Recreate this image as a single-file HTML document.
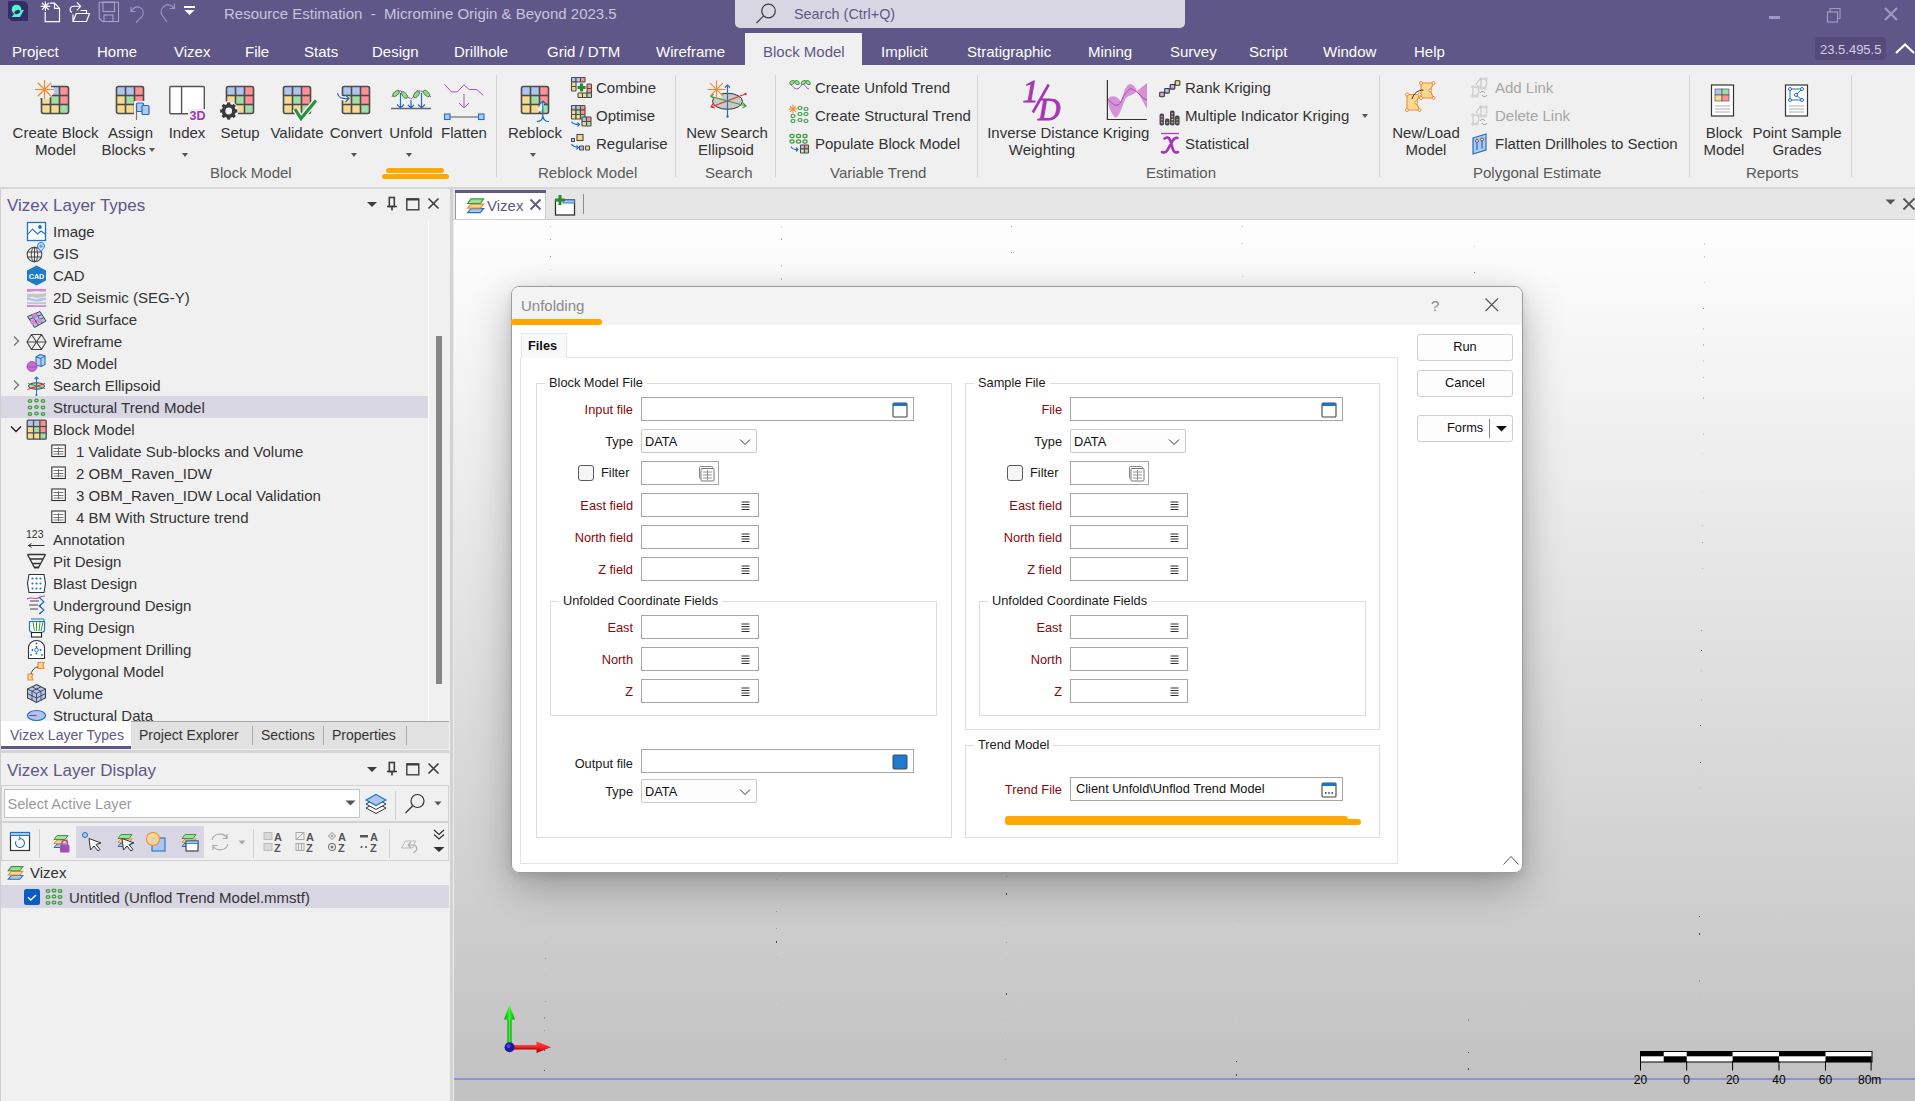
<!DOCTYPE html><html><head><meta charset="utf-8"><style>
*{box-sizing:border-box;margin:0;padding:0}
html,body{width:1915px;height:1101px;overflow:hidden;background:#f0f0f0}
body{font-family:"Liberation Sans",sans-serif;color:#333;position:relative}
.a{position:absolute}
.t{position:absolute;white-space:pre;line-height:1}
svg{position:absolute;overflow:visible}
.menu{position:absolute;top:44px;font-size:15px;color:#fff;line-height:1;white-space:pre}
.rl{position:absolute;font-size:15px;color:#333;line-height:1;white-space:pre;text-align:center}
.gl{position:absolute;top:165px;font-size:15px;color:#595959;line-height:1;white-space:pre}
.sep{position:absolute;top:75px;width:1px;height:102px;background:#d4d4d4}
.sm{position:absolute;font-size:15px;color:#333;line-height:1;white-space:pre}
.dd{position:absolute;width:0;height:0;border-left:3.5px solid transparent;border-right:3.5px solid transparent;border-top:4px solid #555}
.ptitle{position:absolute;font-size:17px;color:#5f5787;line-height:1;white-space:pre}
.tr{position:absolute;font-size:15px;color:#333;line-height:1;white-space:pre}
.dl{position:absolute;font-size:12.8px;line-height:1;white-space:pre;color:#1a1a1a}
.red{color:#8b1016}
.fld{position:absolute;height:24px;background:#fff;border:1px solid #a6a6a6}
.grp{position:absolute;border:1px solid #dcdcdc}
.gt{position:absolute;font-size:12.8px;line-height:1;white-space:pre;color:#1a1a1a;background:#fff;padding:0 4px}
.btn{position:absolute;background:#fdfdfd;border:1px solid #cfcfcf;border-radius:3px;font-size:12.8px;color:#1a1a1a;text-align:center}
</style></head><body>
<div class="a" style="left:0;top:0;width:1915px;height:65px;background:#5f5787"></div>
<svg style="left:8px;top:1px" width="21" height="21" viewBox="0 0 21 21" ><path d="M0 0h16.5l3.5 3.5V20H3.5L0 16.5z" fill="#382b69"/><circle cx="8.5" cy="8.5" r="4.8" fill="#4dfbd0"/><path d="M3.8 16L7 11.5 11 9.5 16 8.8 12 16z" fill="#4dfbd0"/><ellipse cx="9.3" cy="11" rx="3" ry="1.9" transform="rotate(-22 9.3 11)" fill="#382b69"/></svg>
<svg style="left:40px;top:1px" width="22" height="22" viewBox="0 0 22 22" ><line x1="0.70" y1="5.30" x2="10.10" y2="5.30" stroke="#ffffff" stroke-width="1.2"/><line x1="2.08" y1="1.98" x2="8.72" y2="8.62" stroke="#ffffff" stroke-width="1.2"/><line x1="5.40" y1="0.60" x2="5.40" y2="10.00" stroke="#ffffff" stroke-width="1.2"/><line x1="8.72" y1="1.98" x2="2.08" y2="8.62" stroke="#ffffff" stroke-width="1.2"/><path d="M5.2 11V20.6h14.3V7.4l-5-5.2H9.8" fill="none" stroke="#fff" stroke-width="1.2"/><path d="M14.5 2.2v5.2h5" fill="none" stroke="#fff" stroke-width="1.1"/></svg>
<svg style="left:69px;top:1px" width="24" height="22" viewBox="0 0 24 22" ><path d="M3 11.5C0.2 10 0.3 5.3 5 5.3H11.5M7.8 1.3l3.9 4-3.9 4.1" fill="none" stroke="#fff" stroke-width="1.1"/><path d="M11.5 9.5H17.5V12.5M4 13.5V20.5H17.5L20.5 12.5H7.2L4 20.5" fill="none" stroke="#fff" stroke-width="1.2"/></svg>
<svg style="left:98px;top:1px" width="22" height="22" viewBox="0 0 22 22" ><path d="M1.2 1.2h19.3v19.3H4.5L1.2 17.2z" fill="none" stroke="#aaa3c8" stroke-width="1.1"/><rect x="5" y="1.2" width="11.5" height="9.3" fill="none" stroke="#aaa3c8" stroke-width="1.1"/><rect x="6" y="14" width="9" height="6.5" fill="none" stroke="#aaa3c8" stroke-width="1.1"/></svg>
<svg style="left:129px;top:2px" width="20" height="21" viewBox="0 0 20 21" ><path d="M2 5v4.5h4.5M2.5 9C5 5 8 4 11 5.5s4 5 2.5 8.5L7 20.5" fill="none" stroke="#9e96bd" stroke-width="1.2"/></svg>
<svg style="left:157px;top:2px" width="20" height="21" viewBox="0 0 20 21" ><path d="M17.5 1.5v5h-5M17 6C14 2.5 10.5 2 7.5 4S3 9.5 5 13l5 7" fill="none" stroke="#9e96bd" stroke-width="1.2"/></svg>
<svg style="left:183px;top:5px" width="14" height="12" viewBox="0 0 14 12" ><rect x="1" y="1" width="11" height="2" fill="#fff"/><path d="M1.5 5h10l-5 5z" fill="#fff"/></svg>
<div class="t" style="left:224px;top:6px;font-size:15px;color:#c9c4dd">Resource Estimation  -  Micromine Origin &amp; Beyond 2023.5</div>
<div class="a" style="left:735px;top:0;width:450px;height:28px;background:#d9d6e4;border-radius:0 0 5px 5px"></div>
<svg style="left:755px;top:2px" width="24" height="24" viewBox="0 0 24 24" ><circle cx="13.5" cy="9" r="6.8" fill="none" stroke="#3c3c3c" stroke-width="1.2"/><line x1="8.7" y1="13.8" x2="1.5" y2="21" stroke="#3c3c3c" stroke-width="1.2"/></svg>
<div class="t" style="left:794px;top:6.5px;font-size:14.4px;color:#5f5787">Search (Ctrl+Q)</div>
<div class="a" style="left:1769px;top:16px;width:11px;height:3px;background:#9f98bf"></div>
<svg style="left:1826px;top:7px" width="15" height="16" viewBox="0 0 15 16" ><rect x="1.5" y="5" width="10" height="10" fill="none" stroke="#9f98bf" stroke-width="1.2"/><path d="M4 5V1.5h10v10h-2.5" fill="none" stroke="#9f98bf" stroke-width="1.2"/></svg>
<svg style="left:1883px;top:6px" width="16" height="16" viewBox="0 0 16 16" ><path d="M2 2l12 12M14 2L2 14" stroke="#9f98bf" stroke-width="2.2"/></svg>
<div class="a" style="left:1815px;top:37px;width:71px;height:23px;background:#544b7a;border-radius:4px"></div>
<div class="t" style="left:1820px;top:43px;font-size:13px;color:#d2cde3">23.5.495.5</div>
<svg style="left:1894px;top:41px" width="22" height="16" viewBox="0 0 22 16" ><path d="M2 12l9-8.5 9 8.5" fill="none" stroke="#fff" stroke-width="2.2"/></svg>
<div class="menu" style="left:12px">Project</div>
<div class="menu" style="left:97px">Home</div>
<div class="menu" style="left:174px">Vizex</div>
<div class="menu" style="left:245px">File</div>
<div class="menu" style="left:304px">Stats</div>
<div class="menu" style="left:372px">Design</div>
<div class="menu" style="left:454px">Drillhole</div>
<div class="menu" style="left:547px">Grid / DTM</div>
<div class="menu" style="left:656px">Wireframe</div>
<div class="a" style="left:745px;top:33px;width:117px;height:32px;background:#f0f0f0"></div>
<div class="menu" style="left:763px;color:#5f5787">Block Model</div>
<div class="menu" style="left:881px">Implicit</div>
<div class="menu" style="left:967px">Stratigraphic</div>
<div class="menu" style="left:1088px">Mining</div>
<div class="menu" style="left:1170px">Survey</div>
<div class="menu" style="left:1249px">Script</div>
<div class="menu" style="left:1323px">Window</div>
<div class="menu" style="left:1414px">Help</div>
<div class="a" style="left:0;top:187px;width:1915px;height:2px;background:#d6d6d6"></div>
<div class="rl" style="left:0px;top:124.5px;width:111px;">Create Block</div>
<div class="rl" style="left:0px;top:141.5px;width:111px;">Model</div>
<div class="rl" style="left:80px;top:124.5px;width:101px;">Assign</div>
<div class="rl" style="left:101.5px;top:141.5px;text-align:left">Blocks</div>
<div class="dd" style="left:149px;top:148px"></div>
<div class="rl" style="left:147px;top:124.5px;width:80px;">Index</div>
<div class="dd" style="left:182px;top:153px"></div>
<div class="rl" style="left:200px;top:124.5px;width:80px;">Setup</div>
<div class="rl" style="left:257px;top:124.5px;width:80px;">Validate</div>
<div class="rl" style="left:316px;top:124.5px;width:80px;">Convert</div>
<div class="dd" style="left:351px;top:153px"></div>
<div class="rl" style="left:371px;top:124.5px;width:80px;">Unfold</div>
<div class="dd" style="left:406px;top:153px"></div>
<div class="rl" style="left:424px;top:124.5px;width:80px;">Flatten</div>
<div class="sep" style="left:496px"></div>
<div class="rl" style="left:495px;top:124.5px;width:80px;">Reblock</div>
<div class="dd" style="left:530px;top:153px"></div>
<div class="sm" style="left:596px;top:79.5px">Combine</div>
<div class="sm" style="left:596px;top:107.5px">Optimise</div>
<div class="sm" style="left:596px;top:135.5px">Regularise</div>
<div class="sep" style="left:675px"></div>
<div class="rl" style="left:667px;top:124.5px;width:120px;">New Search</div>
<div class="rl" style="left:666px;top:141.5px;width:120px;">Ellipsoid</div>
<div class="sep" style="left:775px"></div>
<div class="sm" style="left:815px;top:79.5px">Create Unfold Trend</div>
<div class="sm" style="left:815px;top:107.5px">Create Structural Trend</div>
<div class="sm" style="left:815px;top:135.5px">Populate Block Model</div>
<div class="sep" style="left:977px"></div>
<div class="rl" style="left:973px;top:124.5px;width:140px;">Inverse Distance</div>
<div class="rl" style="left:972px;top:141.5px;width:140px;">Weighting</div>
<div class="rl" style="left:1086px;top:124.5px;width:80px;">Kriging</div>
<div class="sm" style="left:1185px;top:79.5px">Rank Kriging</div>
<div class="sm" style="left:1185px;top:107.5px">Multiple Indicator Kriging</div>
<div class="sm" style="left:1185px;top:135.5px">Statistical</div>
<div class="dd" style="left:1362px;top:114px"></div>
<div class="sep" style="left:1379px"></div>
<div class="rl" style="left:1376px;top:124.5px;width:100px;">New/Load</div>
<div class="rl" style="left:1376px;top:141.5px;width:100px;">Model</div>
<div class="sm" style="left:1495px;top:79.5px;color:#a6a6a6">Add Link</div>
<div class="sm" style="left:1495px;top:107.5px;color:#a6a6a6">Delete Link</div>
<div class="sm" style="left:1495px;top:135.5px">Flatten Drillholes to Section</div>
<div class="sep" style="left:1689px"></div>
<div class="rl" style="left:1684px;top:124.5px;width:80px;">Block</div>
<div class="rl" style="left:1684px;top:141.5px;width:80px;">Model</div>
<div class="rl" style="left:1747px;top:124.5px;width:100px;">Point Sample</div>
<div class="rl" style="left:1747px;top:141.5px;width:100px;">Grades</div>
<div class="sep" style="left:1851px"></div>
<div class="gl" style="left:210px">Block Model</div>
<div class="gl" style="left:538px">Reblock Model</div>
<div class="gl" style="left:705px">Search</div>
<div class="gl" style="left:830px">Variable Trend</div>
<div class="gl" style="left:1146px">Estimation</div>
<div class="gl" style="left:1473px">Polygonal Estimate</div>
<div class="gl" style="left:1746px">Reports</div>
<div class="a" style="left:386px;top:168px;width:58px;height:5px;background:#ffa800;border-radius:3px"></div>
<div class="a" style="left:382px;top:173.5px;width:67px;height:5px;background:#ffa800;border-radius:3px"></div>
<svg style="left:30px;top:75px" width="45" height="45" viewBox="0 0 45 45" ><rect x="11.50" y="11.50" width="9.00" height="9.00" fill="#aec5ee"/><rect x="20.50" y="11.50" width="9.00" height="9.00" fill="#aec5ee"/><rect x="29.50" y="11.50" width="9.00" height="9.00" fill="#ff9196"/><rect x="11.50" y="20.50" width="9.00" height="9.00" fill="#f7da8f"/><rect x="20.50" y="20.50" width="9.00" height="9.00" fill="#a1dda6"/><rect x="29.50" y="20.50" width="9.00" height="9.00" fill="#ff9196"/><rect x="11.50" y="29.50" width="9.00" height="9.00" fill="#f7da8f"/><rect x="20.50" y="29.50" width="9.00" height="9.00" fill="#f7da8f"/><rect x="29.50" y="29.50" width="9.00" height="9.00" fill="#a1dda6"/><rect x="11.50" y="11.50" width="27" height="27" rx="2" fill="none" stroke="#4b4b4b" stroke-width="1.6"/><line x1="20.50" y1="11.5" x2="20.50" y2="38.5" stroke="#4b4b4b" stroke-width="1.6"/><line x1="11.5" y1="20.50" x2="38.5" y2="20.50" stroke="#4b4b4b" stroke-width="1.6"/><line x1="29.50" y1="11.5" x2="29.50" y2="38.5" stroke="#4b4b4b" stroke-width="1.6"/><line x1="11.5" y1="29.50" x2="38.5" y2="29.50" stroke="#4b4b4b" stroke-width="1.6"/><circle cx="14.5" cy="14.5" r="9.8" fill="#f0f0f0"/><path d="M11.5 24.5 V23 M24.3 11.5 H21" fill="none" stroke="#4b4b4b" stroke-width="1.6"/><line x1="5.00" y1="14.50" x2="24.00" y2="14.50" stroke="#f08a38" stroke-width="1.2"/><line x1="7.78" y1="7.78" x2="21.22" y2="21.22" stroke="#f08a38" stroke-width="1.2"/><line x1="14.50" y1="5.00" x2="14.50" y2="24.00" stroke="#f08a38" stroke-width="1.2"/><line x1="21.22" y1="7.78" x2="7.78" y2="21.22" stroke="#f08a38" stroke-width="1.2"/></svg>
<svg style="left:110px;top:75px" width="45" height="50" viewBox="0 0 45 50" ><rect x="6.50" y="11.50" width="9.00" height="9.00" fill="#aec5ee"/><rect x="15.50" y="11.50" width="9.00" height="9.00" fill="#aec5ee"/><rect x="24.50" y="11.50" width="9.00" height="9.00" fill="#ff9196"/><rect x="6.50" y="20.50" width="9.00" height="9.00" fill="#f7da8f"/><rect x="15.50" y="20.50" width="9.00" height="9.00" fill="#a1dda6"/><rect x="24.50" y="20.50" width="9.00" height="9.00" fill="#ff9196"/><rect x="6.50" y="29.50" width="9.00" height="9.00" fill="#f7da8f"/><rect x="15.50" y="29.50" width="9.00" height="9.00" fill="#f7da8f"/><rect x="24.50" y="29.50" width="9.00" height="9.00" fill="#a1dda6"/><rect x="6.50" y="11.50" width="27" height="27" rx="2" fill="none" stroke="#4b4b4b" stroke-width="1.6"/><line x1="15.50" y1="11.5" x2="15.50" y2="38.5" stroke="#4b4b4b" stroke-width="1.6"/><line x1="6.5" y1="20.50" x2="33.5" y2="20.50" stroke="#4b4b4b" stroke-width="1.6"/><line x1="24.50" y1="11.5" x2="24.50" y2="38.5" stroke="#4b4b4b" stroke-width="1.6"/><line x1="6.5" y1="29.50" x2="33.5" y2="29.50" stroke="#4b4b4b" stroke-width="1.6"/><rect x="24" y="26" width="12" height="14" fill="#f0f0f0"/><line x1="26.5" y1="36" x2="26.5" y2="45" stroke="#777" stroke-width="1.2"/><rect x="26.5" y="28" width="7" height="8.5" rx="1" fill="#b0c8f0" stroke="#1f6fc0" stroke-width="1.2"/><rect x="32" y="30.5" width="7" height="9" rx="1" fill="#b0c8f0" stroke="#1f6fc0" stroke-width="1.2"/></svg>
<svg style="left:165px;top:80px" width="48" height="45" viewBox="0 0 48 45" ><rect x="4.8" y="6.5" width="34.5" height="27.3" rx="1" fill="#fff" stroke="#555" stroke-width="1.4"/><line x1="16.6" y1="6.5" x2="16.6" y2="33.8" stroke="#555" stroke-width="1.4"/><rect x="23" y="29" width="20" height="12" fill="#f0f0f0"/><text x="24.5" y="39.5" font-family="Liberation Sans" font-weight="bold" font-size="12.5" fill="#a535b5">3D</text></svg>
<svg style="left:215px;top:75px" width="45" height="50" viewBox="0 0 45 50" ><rect x="11.50" y="11.50" width="9.00" height="9.00" fill="#aec5ee"/><rect x="20.50" y="11.50" width="9.00" height="9.00" fill="#aec5ee"/><rect x="29.50" y="11.50" width="9.00" height="9.00" fill="#ff9196"/><rect x="11.50" y="20.50" width="9.00" height="9.00" fill="#f7da8f"/><rect x="20.50" y="20.50" width="9.00" height="9.00" fill="#a1dda6"/><rect x="29.50" y="20.50" width="9.00" height="9.00" fill="#ff9196"/><rect x="11.50" y="29.50" width="9.00" height="9.00" fill="#f7da8f"/><rect x="20.50" y="29.50" width="9.00" height="9.00" fill="#f7da8f"/><rect x="29.50" y="29.50" width="9.00" height="9.00" fill="#a1dda6"/><rect x="11.50" y="11.50" width="27" height="27" rx="2" fill="none" stroke="#4b4b4b" stroke-width="1.6"/><line x1="20.50" y1="11.5" x2="20.50" y2="38.5" stroke="#4b4b4b" stroke-width="1.6"/><line x1="11.5" y1="20.50" x2="38.5" y2="20.50" stroke="#4b4b4b" stroke-width="1.6"/><line x1="29.50" y1="11.5" x2="29.50" y2="38.5" stroke="#4b4b4b" stroke-width="1.6"/><line x1="11.5" y1="29.50" x2="38.5" y2="29.50" stroke="#4b4b4b" stroke-width="1.6"/><circle cx="13.5" cy="36" r="10" fill="#f0f0f0"/><g transform="translate(13.7,36)"><circle r="5.2" fill="none" stroke="#3a3a3a" stroke-width="3.6"/><rect x="-1.6" y="-8.6" width="3.2" height="4" fill="#3a3a3a" transform="rotate(0)"/><rect x="-1.6" y="-8.6" width="3.2" height="4" fill="#3a3a3a" transform="rotate(45)"/><rect x="-1.6" y="-8.6" width="3.2" height="4" fill="#3a3a3a" transform="rotate(90)"/><rect x="-1.6" y="-8.6" width="3.2" height="4" fill="#3a3a3a" transform="rotate(135)"/><rect x="-1.6" y="-8.6" width="3.2" height="4" fill="#3a3a3a" transform="rotate(180)"/><rect x="-1.6" y="-8.6" width="3.2" height="4" fill="#3a3a3a" transform="rotate(225)"/><rect x="-1.6" y="-8.6" width="3.2" height="4" fill="#3a3a3a" transform="rotate(270)"/><rect x="-1.6" y="-8.6" width="3.2" height="4" fill="#3a3a3a" transform="rotate(315)"/></g></svg>
<svg style="left:275px;top:75px" width="50" height="50" viewBox="0 0 50 50" ><rect x="8.50" y="11.50" width="9.00" height="9.00" fill="#aec5ee"/><rect x="17.50" y="11.50" width="9.00" height="9.00" fill="#aec5ee"/><rect x="26.50" y="11.50" width="9.00" height="9.00" fill="#ff9196"/><rect x="8.50" y="20.50" width="9.00" height="9.00" fill="#f7da8f"/><rect x="17.50" y="20.50" width="9.00" height="9.00" fill="#a1dda6"/><rect x="26.50" y="20.50" width="9.00" height="9.00" fill="#ff9196"/><rect x="8.50" y="29.50" width="9.00" height="9.00" fill="#f7da8f"/><rect x="17.50" y="29.50" width="9.00" height="9.00" fill="#f7da8f"/><rect x="26.50" y="29.50" width="9.00" height="9.00" fill="#a1dda6"/><rect x="8.50" y="11.50" width="27" height="27" rx="2" fill="none" stroke="#4b4b4b" stroke-width="1.6"/><line x1="17.50" y1="11.5" x2="17.50" y2="38.5" stroke="#4b4b4b" stroke-width="1.6"/><line x1="8.5" y1="20.50" x2="35.5" y2="20.50" stroke="#4b4b4b" stroke-width="1.6"/><line x1="26.50" y1="11.5" x2="26.50" y2="38.5" stroke="#4b4b4b" stroke-width="1.6"/><line x1="8.5" y1="29.50" x2="35.5" y2="29.50" stroke="#4b4b4b" stroke-width="1.6"/><path d="M20 34l6 9.5 15-18" fill="none" stroke="#f0f0f0" stroke-width="6"/><path d="M20 34l6 9.5 15-18" fill="none" stroke="#2a9140" stroke-width="3.2"/></svg>
<svg style="left:330px;top:75px" width="45" height="45" viewBox="0 0 45 45" ><rect x="12.50" y="11.50" width="9.00" height="9.00" fill="#aec5ee"/><rect x="21.50" y="11.50" width="9.00" height="9.00" fill="#aec5ee"/><rect x="30.50" y="11.50" width="9.00" height="9.00" fill="#ff9196"/><rect x="12.50" y="20.50" width="9.00" height="9.00" fill="#f7da8f"/><rect x="21.50" y="20.50" width="9.00" height="9.00" fill="#a1dda6"/><rect x="30.50" y="20.50" width="9.00" height="9.00" fill="#ff9196"/><rect x="12.50" y="29.50" width="9.00" height="9.00" fill="#f7da8f"/><rect x="21.50" y="29.50" width="9.00" height="9.00" fill="#f7da8f"/><rect x="30.50" y="29.50" width="9.00" height="9.00" fill="#a1dda6"/><rect x="12.50" y="11.50" width="27" height="27" rx="2" fill="none" stroke="#4b4b4b" stroke-width="1.6"/><line x1="21.50" y1="11.5" x2="21.50" y2="38.5" stroke="#4b4b4b" stroke-width="1.6"/><line x1="12.5" y1="20.50" x2="39.5" y2="20.50" stroke="#4b4b4b" stroke-width="1.6"/><line x1="30.50" y1="11.5" x2="30.50" y2="38.5" stroke="#4b4b4b" stroke-width="1.6"/><line x1="12.5" y1="29.50" x2="39.5" y2="29.50" stroke="#4b4b4b" stroke-width="1.6"/><path d="M8 18c1 5 4 6 11 5.5" fill="none" stroke="#f0f0f0" stroke-width="4"/><path d="M7.5 18c1 5 4 6 11 5.5M15.5 20l3.5 3.5-3.5 3.5" fill="none" stroke="#1f6fc0" stroke-width="1.2"/></svg>
<svg style="left:385px;top:80px" width="50" height="35" viewBox="0 0 50 35" ><line x1="6" y1="28.5" x2="46" y2="28.5" stroke="#666" stroke-width="1.4"/><path d="M7 17C9 12 13 10 16 11S22 18 25.5 18.5 29 12 32 11 40 12 46 17" fill="none" stroke="#b050c8" stroke-width="1"/><ellipse cx="11" cy="13.5" rx="4" ry="2.1" transform="rotate(-40 11 13.5)" fill="#9bd38f" stroke="#3b8a3b" stroke-width="0.9"/><ellipse cx="19.5" cy="15" rx="4" ry="2.1" transform="rotate(50 19.5 15)" fill="#9bd38f" stroke="#3b8a3b" stroke-width="0.9"/><ellipse cx="31.5" cy="14.5" rx="4" ry="2.1" transform="rotate(-50 31.5 14.5)" fill="#9bd38f" stroke="#3b8a3b" stroke-width="0.9"/><ellipse cx="41.5" cy="13.5" rx="4" ry="2.1" transform="rotate(45 41.5 13.5)" fill="#9bd38f" stroke="#3b8a3b" stroke-width="0.9"/><path d="M15.5 13v15M12 24.5l3.5 3.5 3.5-3.5M26 20v8M23 25l3 3 3-3M36.5 13v15M33 24.5l3.5 3.5 3.5-3.5" fill="none" stroke="#1f6fc0" stroke-width="1.2"/></svg>
<svg style="left:440px;top:78px" width="50" height="45" viewBox="0 0 50 45" ><path d="M4.4 6.2l7.1 7.7h5.9l6.5-7.1 5.3 4.7h7.6l6.5 5.9" fill="none" stroke="#b050c8" stroke-width="1"/><path d="M24 16v14M19 25l5 5 5-5" fill="none" stroke="#b050c8" stroke-width="1"/><line x1="7" y1="39" x2="41" y2="39" stroke="#888" stroke-width="1.4"/><rect x="4.5" y="36" width="5.5" height="5.5" fill="#b0c8f0" stroke="#1f6fc0" stroke-width="1.1"/><rect x="38.5" y="36" width="5.5" height="5.5" fill="#b0c8f0" stroke="#1f6fc0" stroke-width="1.1"/></svg>
<svg style="left:515px;top:80px" width="45" height="45" viewBox="0 0 45 45" ><rect x="6.50" y="6.50" width="9.00" height="9.00" fill="#aec5ee"/><rect x="15.50" y="6.50" width="9.00" height="9.00" fill="#aec5ee"/><rect x="24.50" y="6.50" width="9.00" height="9.00" fill="#ff9196"/><rect x="6.50" y="15.50" width="9.00" height="9.00" fill="#f7da8f"/><rect x="15.50" y="15.50" width="9.00" height="9.00" fill="#a1dda6"/><rect x="24.50" y="15.50" width="9.00" height="9.00" fill="#ff9196"/><rect x="6.50" y="24.50" width="9.00" height="9.00" fill="#f7da8f"/><rect x="15.50" y="24.50" width="9.00" height="9.00" fill="#f7da8f"/><rect x="24.50" y="24.50" width="9.00" height="9.00" fill="#a1dda6"/><rect x="6.50" y="6.50" width="27" height="27" rx="2" fill="none" stroke="#4b4b4b" stroke-width="1.6"/><line x1="15.50" y1="6.5" x2="15.50" y2="33.5" stroke="#4b4b4b" stroke-width="1.6"/><line x1="6.5" y1="15.50" x2="33.5" y2="15.50" stroke="#4b4b4b" stroke-width="1.6"/><line x1="24.50" y1="6.5" x2="24.50" y2="33.5" stroke="#4b4b4b" stroke-width="1.6"/><line x1="6.5" y1="24.50" x2="33.5" y2="24.50" stroke="#4b4b4b" stroke-width="1.6"/><path d="M23 30c2-.5 3.5-2 4-5v-2" fill="none" stroke="#f0f0f0" stroke-width="4"/><path d="M21.8 41.5c3.5 0 5.8-1.5 6-5.5V21M28 36c.3 4 2.5 5.5 6 5.5M24.5 24.5L28 21l3.5 3.5" fill="none" stroke="#1f6fc0" stroke-width="1.2"/></svg>
<svg style="left:570px;top:76px" width="24" height="24" viewBox="0 0 24 24" ><rect x="1.5" y="1.5" width="4.5" height="4.5" fill="#aec5ee" stroke="#4b4b4b" stroke-width="1.1" rx="0.6"/><rect x="6" y="1.5" width="4.5" height="4.5" fill="#aec5ee" stroke="#4b4b4b" stroke-width="1.1" rx="0.6"/><rect x="10.5" y="1.5" width="4.5" height="4.5" fill="#ff9196" stroke="#4b4b4b" stroke-width="1.1" rx="0.6"/><rect x="1.5" y="6" width="4.5" height="4.5" fill="#f7da8f" stroke="#4b4b4b" stroke-width="1.1" rx="0.6"/><rect x="1.5" y="10.5" width="4.5" height="4.5" fill="#f7da8f" stroke="#4b4b4b" stroke-width="1.1" rx="0.6"/><rect x="17" y="8" width="4.5" height="4.5" fill="#ff9196" stroke="#4b4b4b" stroke-width="1.1" rx="0.6"/><rect x="17" y="12.5" width="4.5" height="4.5" fill="#ff9196" stroke="#4b4b4b" stroke-width="1.1" rx="0.6"/><rect x="8" y="17" width="4.5" height="4.5" fill="#f7da8f" stroke="#4b4b4b" stroke-width="1.1" rx="0.6"/><rect x="12.5" y="17" width="4.5" height="4.5" fill="#f7da8f" stroke="#4b4b4b" stroke-width="1.1" rx="0.6"/><rect x="17" y="17" width="4.5" height="4.5" fill="#a1dda6" stroke="#4b4b4b" stroke-width="1.1" rx="0.6"/><path d="M11.5 7.5v8M7.5 11.5h8" stroke="#2a8a2a" stroke-width="3.2"/></svg>
<svg style="left:570px;top:104px" width="24" height="24" viewBox="0 0 24 24" ><rect x="1.5" y="1.5" width="4.5" height="4.5" fill="#aec5ee" stroke="#4b4b4b" stroke-width="1.1" rx="0.6"/><rect x="6" y="1.5" width="4.5" height="4.5" fill="#aec5ee" stroke="#4b4b4b" stroke-width="1.1" rx="0.6"/><rect x="10.5" y="1.5" width="4.5" height="4.5" fill="#ff9196" stroke="#4b4b4b" stroke-width="1.1" rx="0.6"/><rect x="1.5" y="6" width="4.5" height="4.5" fill="#f7da8f" stroke="#4b4b4b" stroke-width="1.1" rx="0.6"/><rect x="6" y="6" width="4.5" height="4.5" fill="#a1dda6" stroke="#4b4b4b" stroke-width="1.1" rx="0.6"/><rect x="10.5" y="6" width="4.5" height="4.5" fill="#ff9196" stroke="#4b4b4b" stroke-width="1.1" rx="0.6"/><rect x="1.5" y="10.5" width="4.5" height="4.5" fill="#f7da8f" stroke="#4b4b4b" stroke-width="1.1" rx="0.6"/><rect x="6" y="10.5" width="4.5" height="4.5" fill="#f7da8f" stroke="#4b4b4b" stroke-width="1.1" rx="0.6"/><rect x="10.5" y="10.5" width="4.5" height="4.5" fill="#a1dda6" stroke="#4b4b4b" stroke-width="1.1" rx="0.6"/><rect x="12" y="13" width="4.5" height="4.5" fill="#aec5ee" stroke="#4b4b4b" stroke-width="1.1" rx="0.6"/><rect x="16.5" y="13" width="4.5" height="4.5" fill="#ff9196" stroke="#4b4b4b" stroke-width="1.1" rx="0.6"/><rect x="12" y="17.5" width="4.5" height="4.5" fill="#f7da8f" stroke="#4b4b4b" stroke-width="1.1" rx="0.6"/><rect x="16.5" y="17.5" width="4.5" height="4.5" fill="#a1dda6" stroke="#4b4b4b" stroke-width="1.1" rx="0.6"/><path d="M1.5 17.5c1 2.5 3 3 8 3M7.5 18.5l2 2-2 2" fill="none" stroke="#1f6fc0" stroke-width="1.1"/></svg>
<svg style="left:570px;top:132px" width="24" height="24" viewBox="0 0 24 24" ><rect x="7" y="2.5" width="6" height="6" fill="#f7da8f" stroke="#4b4b4b" stroke-width="1.1"/><rect x="1.5" y="6.5" width="3" height="3" fill="#aec5ee" stroke="#4b4b4b" stroke-width="1"/><rect x="9.5" y="14" width="4" height="4" fill="#aec5ee" stroke="#4b4b4b" stroke-width="1.1" rx="0.6"/><rect x="15.5" y="14" width="4" height="4" fill="#f7da8f" stroke="#4b4b4b" stroke-width="1.1" rx="0.6"/><path d="M1.5 12c1 2.5 3 3 7 3.5M6.5 13.5l2 2-2 2" fill="none" stroke="#1f6fc0" stroke-width="1.1"/></svg>
<svg style="left:700px;top:78px" width="50" height="45" viewBox="0 0 50 45" ><ellipse cx="27.5" cy="23.3" rx="15" ry="8" fill="#c9c9c9" stroke="#333" stroke-width="1"/><path d="M20 10.5l-6 9.5h8z" fill="#f0f0f0"/><line x1="27.5" y1="7" x2="27.5" y2="38.5" stroke="#1f6fc0" stroke-width="1.2"/><path d="M25 9.5l2.5-2.5 2.5 2.5" fill="none" stroke="#1f6fc0" stroke-width="1.2"/><circle cx="27.5" cy="38.5" r="1.2" fill="#1f6fc0"/><line x1="11" y1="29" x2="45.5" y2="16" stroke="#e03030" stroke-width="1.1"/><path d="M13 25.5l-2 3.5 4 1" fill="none" stroke="#e03030" stroke-width="1.1"/><circle cx="45.5" cy="16" r="1.2" fill="#e03030"/><line x1="11" y1="18.5" x2="46" y2="28" stroke="#3a9a3a" stroke-width="1.1"/><path d="M43 25l3 3-3.5 2" fill="none" stroke="#3a9a3a" stroke-width="1.1"/><path d="M13.5 16l-2.5 2.5 3 2" fill="none" stroke="#3a9a3a" stroke-width="1.1"/><line x1="7.50" y1="11.50" x2="25.50" y2="11.50" stroke="#f08a38" stroke-width="1.1"/><line x1="10.14" y1="5.14" x2="22.86" y2="17.86" stroke="#f08a38" stroke-width="1.1"/><line x1="16.50" y1="2.50" x2="16.50" y2="20.50" stroke="#f08a38" stroke-width="1.1"/><line x1="22.86" y1="5.14" x2="10.14" y2="17.86" stroke="#f08a38" stroke-width="1.1"/></svg>
<svg style="left:788px;top:78px" width="24" height="14" viewBox="0 0 24 14" ><path d="M2 6c3 2 4 5 7 5s4-5 6-5 3 5 6 5" fill="none" stroke="#b050c8" stroke-width="1"/><ellipse cx="4" cy="4.5" rx="2.5" ry="1.6" transform="rotate(-35 4 4.5)" fill="#a4d9a0" stroke="#3b9a3b" stroke-width="1"/><ellipse cx="9" cy="4.5" rx="2.5" ry="1.6" transform="rotate(35 9 4.5)" fill="#a4d9a0" stroke="#3b9a3b" stroke-width="1"/><ellipse cx="15.5" cy="4.5" rx="2.5" ry="1.6" transform="rotate(-35 15.5 4.5)" fill="#a4d9a0" stroke="#3b9a3b" stroke-width="1"/><ellipse cx="20" cy="4.5" rx="2.5" ry="1.6" transform="rotate(35 20 4.5)" fill="#a4d9a0" stroke="#3b9a3b" stroke-width="1"/></svg>
<svg style="left:788px;top:104px" width="24" height="22" viewBox="0 0 24 22" ><line x1="0.80" y1="5.00" x2="9.20" y2="5.00" stroke="#f08a38" stroke-width="1.1"/><line x1="2.03" y1="2.03" x2="7.97" y2="7.97" stroke="#f08a38" stroke-width="1.1"/><line x1="5.00" y1="0.80" x2="5.00" y2="9.20" stroke="#f08a38" stroke-width="1.1"/><line x1="7.97" y1="2.03" x2="2.03" y2="7.97" stroke="#f08a38" stroke-width="1.1"/><ellipse cx="12" cy="4" rx="2" ry="1.5" fill="none" stroke="#3b9a3b" stroke-width="1.2"/><ellipse cx="18" cy="5" rx="2" ry="1.5" fill="none" stroke="#3b9a3b" stroke-width="1.2"/><ellipse cx="12" cy="10" rx="2" ry="1.5" fill="none" stroke="#3b9a3b" stroke-width="1.2"/><ellipse cx="18" cy="10" rx="2" ry="1.5" fill="none" stroke="#3b9a3b" stroke-width="1.2"/><ellipse cx="5" cy="12" rx="2" ry="1.5" fill="none" stroke="#3b9a3b" stroke-width="1.2"/><ellipse cx="5" cy="17" rx="2" ry="1.5" fill="none" stroke="#3b9a3b" stroke-width="1.2"/><ellipse cx="12" cy="16" rx="2" ry="1.5" fill="none" stroke="#3b9a3b" stroke-width="1.2"/><ellipse cx="18" cy="17" rx="2" ry="1.5" fill="none" stroke="#3b9a3b" stroke-width="1.2"/></svg>
<svg style="left:788px;top:132px" width="24" height="24" viewBox="0 0 24 24" ><ellipse cx="4" cy="4" rx="2.1" ry="1.6" fill="none" stroke="#3b9a3b" stroke-width="1.2"/><ellipse cx="10.5" cy="4" rx="2.1" ry="1.6" fill="none" stroke="#3b9a3b" stroke-width="1.2"/><ellipse cx="17" cy="4" rx="2.1" ry="1.6" fill="none" stroke="#3b9a3b" stroke-width="1.2"/><ellipse cx="4" cy="9.5" rx="2.1" ry="1.6" fill="none" stroke="#3b9a3b" stroke-width="1.2"/><ellipse cx="10.5" cy="9.5" rx="2.1" ry="1.6" fill="none" stroke="#3b9a3b" stroke-width="1.2"/><ellipse cx="17" cy="9.5" rx="2.1" ry="1.6" fill="none" stroke="#3b9a3b" stroke-width="1.2"/><path d="M3 14.5c1 2.5 2.5 3 7 3M8 15.5l2 2-2 2" fill="none" stroke="#1f6fc0" stroke-width="1.1"/><rect x="12.5" y="13" width="4" height="4" fill="#aec5ee" stroke="#4b4b4b" stroke-width="1.1" rx="0.6"/><rect x="16.5" y="13" width="4" height="4" fill="#ff9196" stroke="#4b4b4b" stroke-width="1.1" rx="0.6"/><rect x="12.5" y="17" width="4" height="4" fill="#f7da8f" stroke="#4b4b4b" stroke-width="1.1" rx="0.6"/><rect x="16.5" y="17" width="4" height="4" fill="#a1dda6" stroke="#4b4b4b" stroke-width="1.1" rx="0.6"/></svg>
<svg style="left:1010px;top:75px" width="60" height="50" viewBox="0 0 60 50" ><text x="12.5" y="27" font-family="Liberation Serif" font-style="italic" font-size="32" fill="#a535b5" stroke="#a535b5" stroke-width="0.9">1</text><line x1="38.7" y1="9.5" x2="22.8" y2="37.5" stroke="#a535b5" stroke-width="2.6"/><text x="28" y="44.7" font-family="Liberation Serif" font-style="italic" font-size="31" fill="#a535b5" stroke="#a535b5" stroke-width="0.9">D</text></svg>
<svg style="left:1100px;top:78px" width="50" height="45" viewBox="0 0 50 45" ><path d="M8 21 C10 17, 17 17, 21 24 C23 18, 24 12, 27 8 C30 4, 34 6, 37 13 L47 5 L47 31 L37 13 C33 18, 29 17, 26 20 C24 23, 23 28, 20 34 C18 40, 15 41, 13 37 C10 32, 8 28, 8 21 Z" fill="#d592d8"/><path d="M8 21C12 26 15 28 18 27S22 20 25 16 30 10 32 11 36 13 39 16 44 21 47 22" fill="none" stroke="#a540b0" stroke-width="0.9"/><path d="M7.4 2v39.5h39.4" fill="none" stroke="#333" stroke-width="1.2"/></svg>
<svg style="left:1158px;top:78px" width="26" height="20" viewBox="0 0 26 20" ><path d="M4 16.5L19.5 5" stroke="#333" stroke-width="1"/><rect x="1.7000000000000002" y="14.2" width="4.6" height="4.6" rx="0.8" fill="#d9a2e0" stroke="#333" stroke-width="1.1"/><rect x="6.7" y="10.5" width="4.6" height="4.6" rx="0.8" fill="#aec5ee" stroke="#333" stroke-width="1.1"/><rect x="12.2" y="6.500000000000001" width="4.6" height="4.6" rx="0.8" fill="#d9a2e0" stroke="#333" stroke-width="1.1"/><rect x="17.2" y="2.7" width="4.6" height="4.6" rx="0.8" fill="#f7da8f" stroke="#333" stroke-width="1.1"/></svg>
<svg style="left:1158px;top:106px" width="26" height="22" viewBox="0 0 26 22" ><rect x="2" y="8" width="3.6" height="11" rx="1" fill="#555" stroke="#333" stroke-width="0.8"/><rect x="2.9" y="16" width="1.8" height="1.2" fill="#d18ad8"/><rect x="2.9" y="13" width="1.8" height="1.2" fill="#d18ad8"/><rect x="2.9" y="10" width="1.8" height="1.2" fill="#ff7070"/><rect x="7.5" y="13" width="3.6" height="6" rx="1" fill="#555" stroke="#333" stroke-width="0.8"/><rect x="8.4" y="16" width="1.8" height="1.2" fill="#d18ad8"/><rect x="12.5" y="5" width="3.6" height="14" rx="1" fill="#555" stroke="#333" stroke-width="0.8"/><rect x="13.4" y="16" width="1.8" height="1.2" fill="#d18ad8"/><rect x="13.4" y="13" width="1.8" height="1.2" fill="#f7c860"/><rect x="13.4" y="10" width="1.8" height="1.2" fill="#d18ad8"/><rect x="13.4" y="7" width="1.8" height="1.2" fill="#d18ad8"/><rect x="17.5" y="10" width="3.6" height="9" rx="1" fill="#555" stroke="#333" stroke-width="0.8"/><rect x="18.4" y="16" width="1.8" height="1.2" fill="#d18ad8"/><rect x="18.4" y="13" width="1.8" height="1.2" fill="#5ac070"/></svg>
<svg style="left:1158px;top:130px" width="26" height="26" viewBox="0 0 26 26" ><line x1="3" y1="3.5" x2="21" y2="3.5" stroke="#b040c0" stroke-width="1.3"/><path d="M6.5 8.5c3-2 5-1 6 3l2.5 8c1 3 3 3.5 5 2.5M19.5 8c-2-.5-3.5.5-5 3l-5 9c-1.5 2.5-3.5 3-5.5 2" fill="none" stroke="#a535b5" stroke-width="2.6" stroke-linecap="round"/></svg>
<svg style="left:1405px;top:80px" width="45" height="45" viewBox="0 0 45 45" ><path d="M2 14.5h12.5l-3.3 8 3.3 7.5H2z" fill="#f7da8f" stroke="#f08a38" stroke-width="1.1"/><path d="M16 3h12.5l-3.3 7.5 3.3 7.5H16z" fill="#f7da8f" stroke="#f08a38" stroke-width="1.1"/><circle cx="2" cy="14.5" r="1.5" fill="#fff" stroke="#f08a38" stroke-width="1"/><circle cx="14.5" cy="14.5" r="1.5" fill="#fff" stroke="#f08a38" stroke-width="1"/><circle cx="11.2" cy="22.5" r="1.5" fill="#fff" stroke="#f08a38" stroke-width="1"/><circle cx="14.5" cy="30" r="1.5" fill="#fff" stroke="#f08a38" stroke-width="1"/><circle cx="2" cy="30" r="1.5" fill="#fff" stroke="#f08a38" stroke-width="1"/><circle cx="16" cy="3" r="1.5" fill="#fff" stroke="#f08a38" stroke-width="1"/><circle cx="28.5" cy="3" r="1.5" fill="#fff" stroke="#f08a38" stroke-width="1"/><circle cx="25.2" cy="10.5" r="1.5" fill="#fff" stroke="#f08a38" stroke-width="1"/><circle cx="28.5" cy="18" r="1.5" fill="#fff" stroke="#f08a38" stroke-width="1"/><circle cx="16" cy="18" r="1.5" fill="#fff" stroke="#f08a38" stroke-width="1"/><path d="M7 19c2-6 6-9 11.5-9" fill="none" stroke="#333" stroke-width="1"/></svg>
<svg style="left:1470px;top:76px" width="24" height="24" viewBox="0 0 24 24" ><path d="M3 11h5l1 5-2 4H3z M11 3h5l1 5-2 4h-4z" fill="none" stroke="#c8c8c8" stroke-width="1.1"/><circle cx="3" cy="11" r="1.2" fill="#f0f0f0" stroke="#c8c8c8"/><circle cx="8" cy="11" r="1.2" fill="#f0f0f0" stroke="#c8c8c8"/><circle cx="3" cy="20" r="1.2" fill="#f0f0f0" stroke="#c8c8c8"/><circle cx="7" cy="20" r="1.2" fill="#f0f0f0" stroke="#c8c8c8"/><circle cx="11" cy="3" r="1.2" fill="#f0f0f0" stroke="#c8c8c8"/><circle cx="16" cy="3" r="1.2" fill="#f0f0f0" stroke="#c8c8c8"/><circle cx="11" cy="12" r="1.2" fill="#f0f0f0" stroke="#c8c8c8"/><circle cx="15" cy="12" r="1.2" fill="#f0f0f0" stroke="#c8c8c8"/><path d="M6 9c1-3 3-5 5-6" fill="none" stroke="#aaa" stroke-width="0.8"/><path d="M10 17c1-2 4-2 5 0M12 19c1 2 4 2 5 0" fill="none" stroke="#999" stroke-width="1"/></svg>
<svg style="left:1470px;top:104px" width="24" height="24" viewBox="0 0 24 24" ><path d="M3 11h5l1 5-2 4H3z M11 3h5l1 5-2 4h-4z" fill="none" stroke="#c8c8c8" stroke-width="1.1"/><circle cx="3" cy="11" r="1.2" fill="#f0f0f0" stroke="#c8c8c8"/><circle cx="8" cy="11" r="1.2" fill="#f0f0f0" stroke="#c8c8c8"/><circle cx="3" cy="20" r="1.2" fill="#f0f0f0" stroke="#c8c8c8"/><circle cx="7" cy="20" r="1.2" fill="#f0f0f0" stroke="#c8c8c8"/><circle cx="11" cy="3" r="1.2" fill="#f0f0f0" stroke="#c8c8c8"/><circle cx="16" cy="3" r="1.2" fill="#f0f0f0" stroke="#c8c8c8"/><circle cx="11" cy="12" r="1.2" fill="#f0f0f0" stroke="#c8c8c8"/><circle cx="15" cy="12" r="1.2" fill="#f0f0f0" stroke="#c8c8c8"/><path d="M6 9c1-3 3-5 5-6" fill="none" stroke="#aaa" stroke-width="0.8"/><path d="M10 17c1-2 4-2 5 0M12 19c1 2 4 2 5 0" fill="none" stroke="#999" stroke-width="1"/></svg>
<svg style="left:1470px;top:132px" width="24" height="24" viewBox="0 0 24 24" ><path d="M3 6l13-4v16L3 22z" fill="#b0c8f0" stroke="#1f6fc0" stroke-width="1.2"/><path d="M7 9v9M12 7.5v9" stroke="#1f6fc0" stroke-width="1.2"/><circle cx="7" cy="9" r="1.5" fill="#fff" stroke="#333" stroke-width="0.8"/><circle cx="12" cy="7.5" r="1.5" fill="#fff" stroke="#333" stroke-width="0.8"/></svg>
<svg style="left:1710px;top:82px" width="30" height="40" viewBox="0 0 30 40" ><rect x="1.5" y="3" width="22" height="31" fill="#fff" stroke="#333" stroke-width="1.2"/><rect x="5" y="7" width="7" height="6" fill="#aec5ee" stroke="#555" stroke-width="0.7"/><rect x="12" y="7" width="7" height="6" fill="#a1dda6" stroke="#555" stroke-width="0.7"/><rect x="5" y="13" width="7" height="6" fill="#f7da8f" stroke="#555" stroke-width="0.7"/><rect x="12" y="13" width="7" height="6" fill="#ff9196" stroke="#555" stroke-width="0.7"/><path d="M5 24h15M5 27h15M5 30h15" stroke="#999" stroke-width="0.8"/></svg>
<svg style="left:1784px;top:82px" width="30" height="40" viewBox="0 0 30 40" ><rect x="1.5" y="3" width="22" height="31" fill="#fff" stroke="#333" stroke-width="1.2"/><path d="M6 7v11M6 7l12 0M18 7l-6 6 6 5M6 18h12" fill="none" stroke="#1f6fc0" stroke-width="1"/><circle cx="6" cy="7" r="1.5" fill="#fff" stroke="#1f6fc0" stroke-width="1"/><circle cx="18" cy="7" r="1.5" fill="#fff" stroke="#1f6fc0" stroke-width="1"/><circle cx="12" cy="13" r="1.5" fill="#fff" stroke="#1f6fc0" stroke-width="1"/><circle cx="6" cy="18" r="1.5" fill="#fff" stroke="#1f6fc0" stroke-width="1"/><circle cx="18" cy="18" r="1.5" fill="#fff" stroke="#1f6fc0" stroke-width="1"/><path d="M5 24h15M5 27h15M5 30h15" stroke="#999" stroke-width="0.8"/></svg>
<div class="a" style="left:0;top:189px;width:1px;height:912px;background:#cfcfcf"></div>
<div class="ptitle" style="left:7px;top:197.3px">Vizex Layer Types</div>
<svg style="left:366px;top:201px" width="12" height="7" viewBox="0 0 12 7" ><path d="M1 1h10l-5 5z" fill="#3c3c3c"/></svg>
<svg style="left:386px;top:196px" width="12" height="16" viewBox="0 0 12 16" ><rect x="3.3" y="1.5" width="5" height="9" fill="none" stroke="#3c3c3c" stroke-width="1.6"/><path d="M1 10.5h10M6 10.5v4" stroke="#3c3c3c" stroke-width="1.6"/></svg>
<svg style="left:405px;top:197px" width="16" height="14" viewBox="0 0 16 14" ><rect x="1.8" y="2" width="12" height="10.8" fill="none" stroke="#3c3c3c" stroke-width="1.4"/><line x1="1.8" y1="2.4" x2="13.8" y2="2.4" stroke="#3c3c3c" stroke-width="2.2"/></svg>
<svg style="left:427px;top:197px" width="13" height="13" viewBox="0 0 13 13" ><path d="M1.5 1.5l10 10M11.5 1.5l-10 10" stroke="#3c3c3c" stroke-width="1.6"/></svg>
<div class="a" style="left:428px;top:220px;width:1px;height:501px;background:#ffffff"></div>
<div class="a" style="left:436px;top:336px;width:6px;height:348px;background:#868686"></div>
<div class="a" style="left:1px;top:396px;width:427px;height:22px;background:#d9d6e3"></div>
<div class="a" style="left:1px;top:220px;width:427px;height:501px;overflow:hidden">
<div class="tr" style="left:52px;top:3.5px">Image</div>
<div class="tr" style="left:52px;top:25.5px">GIS</div>
<div class="tr" style="left:52px;top:47.5px">CAD</div>
<div class="tr" style="left:52px;top:69.5px">2D Seismic (SEG-Y)</div>
<div class="tr" style="left:52px;top:91.5px">Grid Surface</div>
<div class="tr" style="left:52px;top:113.5px">Wireframe</div>
<div class="tr" style="left:52px;top:135.5px">3D Model</div>
<div class="tr" style="left:52px;top:157.5px">Search Ellipsoid</div>
<div class="tr" style="left:52px;top:179.5px">Structural Trend Model</div>
<div class="tr" style="left:52px;top:201.5px">Block Model</div>
<div class="tr" style="left:75px;top:223.5px">1 Validate Sub-blocks and Volume</div>
<div class="tr" style="left:75px;top:245.5px">2 OBM_Raven_IDW</div>
<div class="tr" style="left:75px;top:267.5px">3 OBM_Raven_IDW Local Validation</div>
<div class="tr" style="left:75px;top:289.5px">4 BM With Structure trend</div>
<div class="tr" style="left:52px;top:311.5px">Annotation</div>
<div class="tr" style="left:52px;top:333.5px">Pit Design</div>
<div class="tr" style="left:52px;top:355.5px">Blast Design</div>
<div class="tr" style="left:52px;top:377.5px">Underground Design</div>
<div class="tr" style="left:52px;top:399.5px">Ring Design</div>
<div class="tr" style="left:52px;top:421.5px">Development Drilling</div>
<div class="tr" style="left:52px;top:443.5px">Polygonal Model</div>
<div class="tr" style="left:52px;top:465.5px">Volume</div>
<div class="tr" style="left:52px;top:487.5px">Structural Data</div>
</div>
<svg style="left:11px;top:335px" width="10" height="12" viewBox="0 0 10 12" ><path d="M3 1.5l4.5 4.5-4.5 4.5" fill="none" stroke="#777" stroke-width="1.3"/></svg>
<svg style="left:11px;top:379px" width="10" height="12" viewBox="0 0 10 12" ><path d="M3 1.5l4.5 4.5-4.5 4.5" fill="none" stroke="#777" stroke-width="1.3"/></svg>
<svg style="left:9px;top:425px" width="14" height="9" viewBox="0 0 14 9" ><path d="M2 1.5l5 5 5-5" fill="none" stroke="#222" stroke-width="1.5"/></svg>
<svg style="left:26px;top:221px" width="22" height="22" viewBox="0 0 22 22" ><rect x="1.5" y="1.5" width="18" height="18" fill="#fff" stroke="#1f73c4" stroke-width="1.3"/><path d="M1.5 13.5l5-5.5 5 5 3.5-3 5 3.5" fill="none" stroke="#1f73c4" stroke-width="1.1"/><circle cx="14" cy="6" r="1.9" fill="#1f73c4"/></svg>
<svg style="left:26px;top:243px" width="22" height="22" viewBox="0 0 22 22" ><circle cx="8.5" cy="11.5" r="7.3" fill="none" stroke="#444" stroke-width="1.1"/><ellipse cx="8.5" cy="11.5" rx="3.2" ry="7.3" fill="none" stroke="#444" stroke-width="1"/><path d="M1.5 9h14M1.5 14h14M8.5 4v15" stroke="#444" stroke-width="1"/><path d="M15 8.5c-2-2.5-3.5-4-3.5-5.5a3.5 3.5 0 0 1 7 0c0 1.5-1.5 3-3.5 5.5z" fill="#cfe0f6" stroke="#2a7bd0" stroke-width="1"/><circle cx="15" cy="3.2" r="1.1" fill="none" stroke="#2a7bd0" stroke-width="0.9"/></svg>
<svg style="left:26px;top:265px" width="22" height="22" viewBox="0 0 22 22" ><path d="M10.5 0.5l9.5 5v10l-9.5 5-9.5-5v-10z" fill="#1f7ac8"/><text x="10.5" y="13.6" text-anchor="middle" font-family="Liberation Sans" font-weight="bold" font-size="7.2" fill="#fff">CAD</text></svg>
<svg style="left:26px;top:287px" width="22" height="22" viewBox="0 0 22 22" ><path d="M1 2h19v2.5c-6 0-9-1-19 .5z" fill="#d18ad8"/><path d="M1 7c5-1 9 1 19-1v3c-4 1-7 3-12 1.5-3-.8-5-.3-7 .5z" fill="#c6c6c6"/><path d="M1 10.5c3-.5 5 1 8 1.5 4 .5 7-2 11-1.5v2.5c-3 .5-7 2-11 1.5-3-.5-5-1.5-8-1z" fill="#aec5ee"/><path d="M1 15c6-.5 12 1 19 0v2c-5 1-12-1-19 .5z" fill="#c6c6c6"/><path d="M1 18c6-.5 12 1 19 0v2H1z" fill="#d18ad8"/></svg>
<svg style="left:26px;top:309px" width="22" height="22" viewBox="0 0 22 22" ><path d="M1.5 7.5l12.5-5 6 9.5-11.5 6.5z" fill="#aec5ee" stroke="#444" stroke-width="1"/><path d="M5.8 5.8l6.5 10.5M9.8 4.2l6.3 9.8M3 10.5l13-5M5 14.2l12.8-5.5" stroke="#444" stroke-width="0.9"/><path d="M5.8 5.8l4-1.6 2.2 3.6-4 1.7zM10 11l4-1.8 2.2 3.5-4 1.8zM4 12.3l4-1.7 2.2 3.6-3.8 2z" fill="#d18ad8"/></svg>
<svg style="left:26px;top:331px" width="22" height="22" viewBox="0 0 22 22" ><path d="M5.5 3.5h10l4.5 7.5-4.5 7.5h-10l-4.5-7.5z M5.5 3.5l10 15M15.5 3.5l-10 15M1 11h19" fill="none" stroke="#444" stroke-width="1.1"/></svg>
<svg style="left:26px;top:353px" width="22" height="22" viewBox="0 0 22 22" ><path d="M10 4l4-2.5 5 1.5v8.5l-4 2-5-1.5z" fill="#b7cdf2" stroke="#1f73c4" stroke-width="1.1"/><path d="M10 4l5 1.5 4-2.5M15 5.5v8.5" fill="none" stroke="#1f73c4" stroke-width="1"/><circle cx="6" cy="13.5" r="5" fill="#c76bd0" stroke="#a040b0" stroke-width="0.8"/><path d="M1 13.5c2 1 8 1 10 0" fill="none" stroke="#a040b0" stroke-width="0.7"/></svg>
<svg style="left:26px;top:375px" width="22" height="22" viewBox="0 0 22 22" ><ellipse cx="10.5" cy="11" rx="8" ry="3.2" fill="#c8c8c8" stroke="#333" stroke-width="0.9"/><path d="M10.5 2v18M8.5 4l2-2 2 2" fill="none" stroke="#1f73c4" stroke-width="1.1"/><circle cx="10.5" cy="20" r="1" fill="#1f73c4"/><path d="M1.5 14.5l17.5-6" stroke="#e03030" stroke-width="1.1"/><path d="M2 8.5l17 5" stroke="#3a9a3a" stroke-width="1.1"/></svg>
<svg style="left:26px;top:397px" width="22" height="22" viewBox="0 0 22 22" ><ellipse cx="4" cy="4" rx="1.7" ry="1.3" fill="none" stroke="#3b9a3b" stroke-width="1.3"/><ellipse cx="10.5" cy="3.5" rx="1.7" ry="1.3" fill="none" stroke="#3b9a3b" stroke-width="1.3"/><ellipse cx="17" cy="4" rx="1.7" ry="1.3" fill="none" stroke="#3b9a3b" stroke-width="1.3"/><ellipse cx="4" cy="10.5" rx="1.7" ry="1.3" fill="none" stroke="#3b9a3b" stroke-width="1.3"/><ellipse cx="10.5" cy="10" rx="1.7" ry="1.3" fill="none" stroke="#3b9a3b" stroke-width="1.3"/><ellipse cx="17" cy="10.5" rx="1.7" ry="1.3" fill="none" stroke="#3b9a3b" stroke-width="1.3"/><ellipse cx="4" cy="17" rx="1.7" ry="1.3" fill="none" stroke="#3b9a3b" stroke-width="1.3"/><ellipse cx="10.5" cy="16.5" rx="1.7" ry="1.3" fill="none" stroke="#3b9a3b" stroke-width="1.3"/><ellipse cx="17" cy="17" rx="1.7" ry="1.3" fill="none" stroke="#3b9a3b" stroke-width="1.3"/></svg>
<svg style="left:26px;top:419px" width="22" height="22" viewBox="0 0 22 22" ><rect x="1.20" y="1.20" width="6.33" height="6.33" fill="#aec5ee"/><rect x="7.53" y="1.20" width="6.33" height="6.33" fill="#aec5ee"/><rect x="13.87" y="1.20" width="6.33" height="6.33" fill="#ff9196"/><rect x="1.20" y="7.53" width="6.33" height="6.33" fill="#f7da8f"/><rect x="7.53" y="7.53" width="6.33" height="6.33" fill="#a1dda6"/><rect x="13.87" y="7.53" width="6.33" height="6.33" fill="#ff9196"/><rect x="1.20" y="13.87" width="6.33" height="6.33" fill="#f7da8f"/><rect x="7.53" y="13.87" width="6.33" height="6.33" fill="#f7da8f"/><rect x="13.87" y="13.87" width="6.33" height="6.33" fill="#a1dda6"/><rect x="1.20" y="1.20" width="19" height="19" rx="1" fill="none" stroke="#4b4b4b" stroke-width="1.3"/><line x1="7.53" y1="1.2" x2="7.53" y2="20.2" stroke="#4b4b4b" stroke-width="1.3"/><line x1="1.2" y1="7.53" x2="20.2" y2="7.53" stroke="#4b4b4b" stroke-width="1.3"/><line x1="13.87" y1="1.2" x2="13.87" y2="20.2" stroke="#4b4b4b" stroke-width="1.3"/><line x1="1.2" y1="13.87" x2="20.2" y2="13.87" stroke="#4b4b4b" stroke-width="1.3"/></svg>
<svg style="left:26px;top:529px" width="22" height="22" viewBox="0 0 22 22" ><text x="0" y="9" font-family="Liberation Sans" font-size="10.5" fill="#333">123</text><path d="M2.5 16.5h16M2.5 16.5l3-2M2.5 16.5l3 2" stroke="#333" stroke-width="1"/></svg>
<svg style="left:26px;top:551px" width="22" height="22" viewBox="0 0 22 22" ><path d="M1.5 3.5h18M4 8h13M6.5 12.5h8M8 16.5h5" stroke="#333" stroke-width="1.6"/><path d="M1.5 3.5l7 13h4l7-13" fill="none" stroke="#333" stroke-width="1.3"/></svg>
<svg style="left:26px;top:573px" width="22" height="22" viewBox="0 0 22 22" ><path d="M3 1.5h15l1.5 9-1.5 9H3l-1.5-9z" fill="#fff" stroke="#333" stroke-width="1.1"/><circle cx="6.5" cy="5.5" r="1.1" fill="#1f73c4"/><circle cx="6.5" cy="10.5" r="1.1" fill="#1f73c4"/><circle cx="6.5" cy="15.5" r="1.1" fill="#1f73c4"/><circle cx="10.5" cy="5.5" r="1.1" fill="#1f73c4"/><circle cx="10.5" cy="10.5" r="1.1" fill="#1f73c4"/><circle cx="10.5" cy="15.5" r="1.1" fill="#1f73c4"/><circle cx="14.5" cy="5.5" r="1.1" fill="#1f73c4"/><circle cx="14.5" cy="10.5" r="1.1" fill="#1f73c4"/><circle cx="14.5" cy="15.5" r="1.1" fill="#1f73c4"/></svg>
<svg style="left:26px;top:595px" width="22" height="22" viewBox="0 0 22 22" ><path d="M1 4c5-3 8 1 11-1s5-2 7-2" fill="none" stroke="#b050c8" stroke-width="1.1"/><path d="M4 6h9M3 10h9M4 14h8M14 3l4 4-4 4 4 4-4 4" fill="none" stroke="#333" stroke-width="0.9"/><path d="M13 2l5 5-5 4 5 4-5 4" fill="none" stroke="#1f73c4" stroke-width="1.1"/></svg>
<svg style="left:26px;top:617px" width="22" height="22" viewBox="0 0 22 22" ><path d="M3.5 4.5h15v8c0 2-2 3-4 3h-7c-2 0-4-1-4-3z" fill="#fff" stroke="#1f73c4" stroke-width="1.2"/><path d="M5 2h13v3" fill="none" stroke="#1f73c4" stroke-width="1"/><path d="M7 5l1.5 9M10.5 5v9M14 5l-1 9M17 5l-2 9" stroke="#3a9a3a" stroke-width="1"/><rect x="5.5" y="15.5" width="10" height="4.5" fill="#fff" stroke="#222" stroke-width="1.1"/></svg>
<svg style="left:26px;top:639px" width="22" height="22" viewBox="0 0 22 22" ><path d="M2.5 19.5V8.5a8 7 0 0 1 16 0v11z" fill="#fff" stroke="#333" stroke-width="1.1"/><circle cx="10.5" cy="4.5" r="0.9" fill="#1f73c4"/><circle cx="10.5" cy="8" r="1" fill="#1f73c4"/><circle cx="6.5" cy="11" r="1" fill="#1f73c4"/><circle cx="14.5" cy="11" r="1" fill="#1f73c4"/><circle cx="5" cy="16" r="0.9" fill="#1f73c4"/><circle cx="16" cy="16" r="0.9" fill="#1f73c4"/><circle cx="10.5" cy="14.5" r="1" fill="#1f73c4"/><circle cx="10.5" cy="11" r="1.8" fill="none" stroke="#1f73c4" stroke-width="0.9"/></svg>
<svg style="left:26px;top:661px" width="22" height="22" viewBox="0 0 22 22" ><path d="M2 13h5l-1.2 3 1.2 3H2z M12 1.5h6l-1.2 3 1.2 3h-6z" fill="#f7da8f" stroke="#f08a38" stroke-width="1.1"/><path d="M5 13c1-4 4-7 7-7" fill="none" stroke="#333" stroke-width="0.9"/></svg>
<svg style="left:26px;top:683px" width="22" height="22" viewBox="0 0 22 22" ><path d="M10.5 1.5l9 4.5v9l-9 4.5-9-4.5v-9z" fill="#aec5ee" stroke="#444" stroke-width="1.1"/><path d="M1.5 6l9 4.5 9-4.5M10.5 10.5v9M6 3.8l9 4.5M15 3.8l-9 4.5M6 8.2v9M15 8.2v9M1.5 10.5l9 4.5 9-4.5" fill="none" stroke="#444" stroke-width="0.9"/></svg>
<svg style="left:26px;top:705px" width="22" height="22" viewBox="0 0 22 22" ><ellipse cx="10.5" cy="10.5" rx="9" ry="5" fill="#aec5ee" stroke="#1f73c4" stroke-width="1.2"/><path d="M3.5 10.5h7" stroke="#b030a0" stroke-width="1.1"/></svg>
<svg style="left:51px;top:444px" width="16" height="14" viewBox="0 0 16 14" ><rect x="0.8" y="1" width="13.5" height="11.5" fill="#fff" stroke="#333" stroke-width="1.1"/><path d="M2.5 4.5h10M2.5 7.5h10M2.5 10h10M7.5 3.2v8" stroke="#555" stroke-width="0.8"/></svg>
<svg style="left:51px;top:466px" width="16" height="14" viewBox="0 0 16 14" ><rect x="0.8" y="1" width="13.5" height="11.5" fill="#fff" stroke="#333" stroke-width="1.1"/><path d="M2.5 4.5h10M2.5 7.5h10M2.5 10h10M7.5 3.2v8" stroke="#555" stroke-width="0.8"/></svg>
<svg style="left:51px;top:488px" width="16" height="14" viewBox="0 0 16 14" ><rect x="0.8" y="1" width="13.5" height="11.5" fill="#fff" stroke="#333" stroke-width="1.1"/><path d="M2.5 4.5h10M2.5 7.5h10M2.5 10h10M7.5 3.2v8" stroke="#555" stroke-width="0.8"/></svg>
<svg style="left:51px;top:510px" width="16" height="14" viewBox="0 0 16 14" ><rect x="0.8" y="1" width="13.5" height="11.5" fill="#fff" stroke="#333" stroke-width="1.1"/><path d="M2.5 4.5h10M2.5 7.5h10M2.5 10h10M7.5 3.2v8" stroke="#555" stroke-width="0.8"/></svg>
<div class="a" style="left:1px;top:721px;width:448px;height:1px;background:#a9a9a9"></div>
<div class="a" style="left:1px;top:722px;width:448px;height:27px;background:#e1e1e1"></div>
<div class="a" style="left:1px;top:721px;width:130px;height:25px;background:#fff"></div>
<div class="a" style="left:1px;top:746px;width:130px;height:3px;background:#5f5787"></div>
<div class="t" style="left:10px;top:727.5px;font-size:14px;color:#5f5787">Vizex Layer Types</div>
<div class="t" style="left:139px;top:727.5px;font-size:14px;color:#333">Project Explorer</div>
<div class="a" style="left:252px;top:726px;width:1px;height:19px;background:#a9a9a9"></div>
<div class="t" style="left:261px;top:727.5px;font-size:14px;color:#333">Sections</div>
<div class="a" style="left:323px;top:726px;width:1px;height:19px;background:#a9a9a9"></div>
<div class="t" style="left:332px;top:727.5px;font-size:14px;color:#333">Properties</div>
<div class="a" style="left:406px;top:726px;width:1px;height:19px;background:#a9a9a9"></div>
<div class="a" style="left:1px;top:750px;width:448px;height:3px;background:#d4d4d4"></div>
<div class="ptitle" style="left:7px;top:762.3px">Vizex Layer Display</div>
<svg style="left:366px;top:766px" width="12" height="7" viewBox="0 0 12 7" ><path d="M1 1h10l-5 5z" fill="#3c3c3c"/></svg>
<svg style="left:386px;top:761px" width="12" height="16" viewBox="0 0 12 16" ><rect x="3.3" y="1.5" width="5" height="9" fill="none" stroke="#3c3c3c" stroke-width="1.6"/><path d="M1 10.5h10M6 10.5v4" stroke="#3c3c3c" stroke-width="1.6"/></svg>
<svg style="left:405px;top:762px" width="16" height="14" viewBox="0 0 16 14" ><rect x="1.8" y="2" width="12" height="10.8" fill="none" stroke="#3c3c3c" stroke-width="1.4"/><line x1="1.8" y1="2.4" x2="13.8" y2="2.4" stroke="#3c3c3c" stroke-width="2.2"/></svg>
<svg style="left:427px;top:762px" width="13" height="13" viewBox="0 0 13 13" ><path d="M1.5 1.5l10 10M11.5 1.5l-10 10" stroke="#3c3c3c" stroke-width="1.6"/></svg>
<div class="a" style="left:1px;top:785px;width:448px;height:76px;border:1px solid #d2d2d2;border-right:1px solid #d2d2d2"></div>
<div class="a" style="left:1px;top:821px;width:448px;height:2px;background:#d2d2d2"></div>
<div class="a" style="left:4px;top:789px;width:356px;height:29px;background:#fff;border:1px solid #c4c4c4"></div>
<div class="t" style="left:7.5px;top:797px;font-size:14.6px;color:#9a9a9a">Select Active Layer</div>
<svg style="left:345px;top:800px" width="11" height="7" viewBox="0 0 11 7" ><path d="M0.5 0.5h10l-5 5z" fill="#555"/></svg>
<svg style="left:365px;top:793px" width="22" height="22" viewBox="0 0 22 22" ><path d="M11 9.5l10 5.5-10 5.5-10-5.5z" fill="#fff" stroke="#333" stroke-width="1"/><path d="M11 5.5l10 5.5-10 5.5-10-5.5z" fill="#fff" stroke="#333" stroke-width="1"/><path d="M11 1.5l10 5.5-10 5.5-10-5.5z" fill="#aec5ee" stroke="#1f73c4" stroke-width="1.1"/></svg>
<div class="a" style="left:395px;top:791px;width:1px;height:29px;background:#cfcfcf"></div>
<svg style="left:404px;top:793px" width="24" height="23" viewBox="0 0 24 23" ><circle cx="13.5" cy="8" r="6.5" fill="none" stroke="#333" stroke-width="1.2"/><line x1="9" y1="12.5" x2="1.5" y2="20" stroke="#333" stroke-width="1.2"/></svg>
<svg style="left:434px;top:801px" width="8" height="6" viewBox="0 0 8 6" ><path d="M0.5 0.5h7l-3.5 4z" fill="#555"/></svg>
<div class="a" style="left:76px;top:826px;width:128px;height:32px;background:#d9d6e3"></div>
<div class="a" style="left:39px;top:829px;width:1px;height:29px;background:#cfcfcf"></div>
<div class="a" style="left:253px;top:829px;width:1px;height:29px;background:#cfcfcf"></div>
<div class="a" style="left:389px;top:829px;width:1px;height:29px;background:#cfcfcf"></div>
<svg style="left:9px;top:831px" width="22" height="22" viewBox="0 0 22 22" ><rect x="1.5" y="1.5" width="19" height="18" fill="#fff" stroke="#333" stroke-width="1.2"/><rect x="1.5" y="1.5" width="19" height="3" fill="#aec5ee" stroke="#1f73c4" stroke-width="1"/><path d="M7 10a4.5 4.5 0 1 0 4-2.5M10 5.5l1.5 2-2 1.5" fill="none" stroke="#1f73c4" stroke-width="1.1"/></svg>
<svg style="left:50px;top:832px" width="22" height="22" viewBox="0 0 22 22" ><g transform="translate(0,1) scale(1.0)"><path d="M4 14.5h11l3-3.5H7z" fill="#aec5ee" stroke="#1f73c4" stroke-width="1"/><path d="M4 10.5h11l3-3.5H7z" fill="#f7da8f" stroke="#f08a38" stroke-width="1"/><path d="M4 6.5h11l3-4H7z" fill="#a1dda6" stroke="#3a9a3a" stroke-width="1"/></g><rect x="10" y="13" width="9.5" height="7.5" rx="1" fill="#a64cb5"/><path d="M12 13v-2.5a2.8 2.8 0 0 1 5.5 0V13" fill="none" stroke="#a64cb5" stroke-width="1.4"/></svg>
<svg style="left:81px;top:831px" width="22" height="22" viewBox="0 0 22 22" ><circle cx="4" cy="4" r="2.5" fill="#aec5ee" stroke="#1f73c4" stroke-width="1"/><path d="M8 7.5l12 4.5-5 1.5 4 5-2 1.5-4-5-3.5 4z" fill="#fff" stroke="#333" stroke-width="1"/></svg>
<svg style="left:114px;top:831px" width="22" height="22" viewBox="0 0 22 22" ><g transform="translate(0,1) scale(1.0)"><path d="M4 14.5h11l3-3.5H7z" fill="#aec5ee" stroke="#1f73c4" stroke-width="1"/><path d="M4 10.5h11l3-3.5H7z" fill="#f7da8f" stroke="#f08a38" stroke-width="1"/><path d="M4 6.5h11l3-4H7z" fill="#a1dda6" stroke="#3a9a3a" stroke-width="1"/></g><path d="M8 7.5l12 4.5-5 1.5 4 5-2 1.5-4-5-3.5 4z" fill="#fff" stroke="#333" stroke-width="1"/></svg>
<svg style="left:145px;top:831px" width="22" height="22" viewBox="0 0 22 22" ><rect x="7" y="7" width="13" height="13" fill="#aec5ee" stroke="#1f73c4" stroke-width="1.1"/><circle cx="8" cy="8" r="6.5" fill="#f7da8f" fill-opacity="0.85" stroke="#f08a38" stroke-width="1.1"/></svg>
<svg style="left:178px;top:831px" width="22" height="22" viewBox="0 0 22 22" ><g transform="translate(0,1) scale(1.0)"><path d="M4 14.5h11l3-3.5H7z" fill="#aec5ee" stroke="#1f73c4" stroke-width="1"/><path d="M4 10.5h11l3-3.5H7z" fill="#f7da8f" stroke="#f08a38" stroke-width="1"/><path d="M4 6.5h11l3-4H7z" fill="#a1dda6" stroke="#3a9a3a" stroke-width="1"/></g><rect x="8" y="10" width="12" height="10" fill="#fff" stroke="#333" stroke-width="1.1"/><rect x="8" y="10" width="12" height="2.5" fill="#aec5ee" stroke="#1f73c4" stroke-width="0.8"/></svg>
<svg style="left:209px;top:831px" width="24" height="22" viewBox="0 0 24 22" ><path d="M3 9a8 7 0 0 1 15-2M18 3v4.5h-4.5M19 13a8 7 0 0 1-15 2M4 19v-4.5h4.5" fill="none" stroke="#aaa" stroke-width="1.2"/></svg>
<svg style="left:238px;top:840px" width="9" height="6" viewBox="0 0 9 6" ><path d="M0.5 0.5h7l-3.5 4z" fill="#aaa"/></svg>
<svg style="left:263px;top:831px" width="22" height="22" viewBox="0 0 22 22" ><rect x="1" y="1.5" width="8" height="7" fill="#d9d9d9" stroke="#bbb"/><rect x="1" y="12.5" width="8" height="7" fill="#d9d9d9" stroke="#bbb"/><text x="11" y="10" font-family="Liberation Sans" font-weight="bold" font-size="11" fill="#555">A</text><text x="11" y="21" font-family="Liberation Sans" font-weight="bold" font-size="11" fill="#555">Z</text></svg>
<svg style="left:295px;top:831px" width="22" height="22" viewBox="0 0 22 22" ><rect x="1" y="1.5" width="8" height="7" fill="#eee" stroke="#aaa"/><path d="M1 8.5l8-7" stroke="#aaa"/><rect x="1" y="12.5" width="8" height="7" fill="#eee" stroke="#aaa"/><path d="M3.5 12.5v7M6.5 12.5v7" stroke="#aaa"/><text x="11" y="10" font-family="Liberation Sans" font-weight="bold" font-size="11" fill="#555">A</text><text x="11" y="21" font-family="Liberation Sans" font-weight="bold" font-size="11" fill="#555">Z</text></svg>
<svg style="left:327px;top:831px" width="22" height="22" viewBox="0 0 22 22" ><path d="M5 1.5l3.5 3.5-3.5 3.5-3.5-3.5z" fill="none" stroke="#888"/><circle cx="5" cy="5" r="1" fill="#888"/><circle cx="5" cy="16" r="3.5" fill="none" stroke="#777" stroke-width="1.1"/><circle cx="5" cy="16" r="1.5" fill="#777"/><text x="11" y="10" font-family="Liberation Sans" font-weight="bold" font-size="11" fill="#555">A</text><text x="11" y="21" font-family="Liberation Sans" font-weight="bold" font-size="11" fill="#555">Z</text></svg>
<svg style="left:359px;top:831px" width="22" height="22" viewBox="0 0 22 22" ><rect x="1" y="4" width="8" height="2.5" fill="#555"/><circle cx="2.5" cy="16" r="1.1" fill="#555"/><circle cx="7" cy="16" r="1.1" fill="#555"/><text x="11" y="10" font-family="Liberation Sans" font-weight="bold" font-size="11" fill="#555">A</text><text x="11" y="21" font-family="Liberation Sans" font-weight="bold" font-size="11" fill="#555">Z</text></svg>
<svg style="left:400px;top:835px" width="22" height="18" viewBox="0 0 22 18" ><path d="M1.5 13l4-7h10l-3 7z" fill="none" stroke="#bbb" stroke-width="1"/><path d="M11 7l-3 3 3 3M8 10h5a3.5 3.5 0 0 1 2 6.5l-1.5 1.5" fill="none" stroke="#aaa" stroke-width="1.1"/></svg>
<svg style="left:432px;top:828px" width="14" height="26" viewBox="0 0 14 26" ><path d="M2 2l5 4.5 5-4.5M2 6.5l5 4.5 5-4.5" fill="none" stroke="#333" stroke-width="1.3"/><path d="M1.5 19h11l-5.5 5z" fill="#333"/></svg>
<svg style="left:4px;top:864px" width="22" height="20" viewBox="0 0 22 20" ><g transform="translate(0,0) scale(1.05)"><path d="M4 14.5h11l3-3.5H7z" fill="#aec5ee" stroke="#1f73c4" stroke-width="1"/><path d="M4 10.5h11l3-3.5H7z" fill="#f7da8f" stroke="#f08a38" stroke-width="1"/><path d="M4 6.5h11l3-4H7z" fill="#a1dda6" stroke="#3a9a3a" stroke-width="1"/></g></svg>
<div class="tr" style="left:30px;top:865px">Vizex</div>
<div class="a" style="left:1px;top:885px;width:448px;height:23px;background:#d9d6e3"></div>
<svg style="left:23px;top:888px" width="18" height="18" viewBox="0 0 18 18" ><rect x="1" y="1" width="16" height="16" rx="2.5" fill="#0a5cc2"/><path d="M5 9.3l2.8 2.8 5.2-5.2" fill="none" stroke="#fff" stroke-width="1.4"/></svg>
<svg style="left:44px;top:886px" width="20" height="22" viewBox="0 0 20 22" ><ellipse cx="4" cy="5" rx="1.9" ry="1.4" fill="none" stroke="#3b9a3b" stroke-width="1.2"/><ellipse cx="10" cy="4.5" rx="1.9" ry="1.4" fill="none" stroke="#3b9a3b" stroke-width="1.2"/><ellipse cx="16" cy="5" rx="1.9" ry="1.4" fill="none" stroke="#3b9a3b" stroke-width="1.2"/><ellipse cx="4" cy="11" rx="1.9" ry="1.4" fill="none" stroke="#3b9a3b" stroke-width="1.2"/><ellipse cx="10" cy="10.5" rx="1.9" ry="1.4" fill="none" stroke="#3b9a3b" stroke-width="1.2"/><ellipse cx="16" cy="11" rx="1.9" ry="1.4" fill="none" stroke="#3b9a3b" stroke-width="1.2"/><ellipse cx="4" cy="17" rx="1.9" ry="1.4" fill="none" stroke="#3b9a3b" stroke-width="1.2"/><ellipse cx="10" cy="16.5" rx="1.9" ry="1.4" fill="none" stroke="#3b9a3b" stroke-width="1.2"/><ellipse cx="16" cy="17" rx="1.9" ry="1.4" fill="none" stroke="#3b9a3b" stroke-width="1.2"/></svg>
<div class="tr" style="left:69px;top:889.7px">Untitled (Unflod Trend Model.mmstf)</div>
<div class="a" style="left:450px;top:189px;width:3px;height:912px;background:#d2d2d2"></div>
<div class="a" style="left:453px;top:189px;width:1462px;height:30px;background:#e6e6e6"></div>
<div class="a" style="left:453px;top:219px;width:1462px;height:1px;background:#cdcdcd"></div>
<div class="a" style="left:453px;top:220px;width:1462px;height:881px;background:linear-gradient(#fefefe,#c2c2c2 860px)"></div>
<div class="a" style="left:455px;top:190px;width:91px;height:29px;background:#fff;border-left:1px solid #9a9a9a;border-right:1px solid #c9c9c9"></div>
<div class="a" style="left:455px;top:190px;width:91px;height:3px;background:#5f5787"></div>
<div class="a" style="left:453px;top:219px;width:1462px;height:1px;background:#cdcdcd"></div>
<svg style="left:463px;top:195px" width="24" height="22" viewBox="0 0 24 22" ><g transform="translate(0,1) scale(1.15)"><path d="M4 14.5h11l3-3.5H7z" fill="#aec5ee" stroke="#1f73c4" stroke-width="1"/><path d="M4 10.5h11l3-3.5H7z" fill="#f7da8f" stroke="#f08a38" stroke-width="1"/><path d="M4 6.5h11l3-4H7z" fill="#a1dda6" stroke="#3a9a3a" stroke-width="1"/></g></svg>
<div class="t" style="left:487px;top:198px;font-size:15px;color:#5f5787">Vizex</div>
<svg style="left:529px;top:198px" width="14" height="14" viewBox="0 0 14 14" ><path d="M1.5 1.5l10 10M11.5 1.5l-10 10" stroke="#5f5787" stroke-width="1.8"/></svg>
<svg style="left:554px;top:194px" width="22" height="22" viewBox="0 0 22 22" ><rect x="1.5" y="6" width="19" height="15" fill="#fff" stroke="#333" stroke-width="1.3"/><rect x="9" y="6" width="11.5" height="3" fill="#aec5ee" stroke="#1f73c4" stroke-width="0.9"/><path d="M6 1v10M1 6h10" stroke="#2a8a2a" stroke-width="3"/></svg>
<div class="a" style="left:583px;top:194px;width:1px;height:20px;background:#8c8c8c"></div>
<svg style="left:1885px;top:199px" width="12" height="7" viewBox="0 0 12 7" ><path d="M0.5 0.5h10l-5 5z" fill="#555"/></svg>
<svg style="left:1902px;top:197px" width="14" height="14" viewBox="0 0 14 14" ><path d="M1.5 1.5l11 11M12.5 1.5l-11 11" stroke="#555" stroke-width="1.8"/></svg>
<div class="a" style="left:453px;top:1078px;width:1462px;height:2px;background:#8a8ad8;opacity:.9"></div>
<div class="a" style="left:453px;top:220px;width:1px;height:881px;background:#ececec"></div>
<svg style="left:455px;top:220px" width="1460" height="860" viewBox="0 0 1460 860" ><rect x="95" y="6" width="1" height="1" fill="#8fdc8f"/><rect x="95" y="19" width="1" height="1" fill="#6fae6f"/><rect x="95" y="36" width="1" height="1" fill="#6fae6f"/><rect x="95" y="49" width="1" height="1" fill="#b8eab8"/><rect x="95" y="65" width="1" height="1" fill="#b8eab8"/><rect x="94" y="91" width="1" height="2" fill="#8fdc8f"/><rect x="94" y="143" width="1" height="1" fill="#2e5a2e"/><rect x="94" y="156" width="1" height="1" fill="#8fdc8f"/><rect x="94" y="176" width="1" height="2" fill="#2e5a2e"/><rect x="94" y="193" width="1" height="1" fill="#8fdc8f"/><rect x="93" y="219" width="1" height="1" fill="#8fdc8f"/><rect x="93" y="232" width="1" height="2" fill="#2e5a2e"/><rect x="93" y="245" width="1" height="2" fill="#b8eab8"/><rect x="93" y="271" width="1" height="1" fill="#a8e8a8"/><rect x="93" y="314" width="1" height="2" fill="#8fdc8f"/><rect x="93" y="330" width="1" height="2" fill="#a8e8a8"/><rect x="92" y="370" width="1" height="1" fill="#2e5a2e"/><rect x="92" y="396" width="1" height="1" fill="#a8e8a8"/><rect x="92" y="416" width="1" height="2" fill="#2e5a2e"/><rect x="92" y="459" width="1" height="2" fill="#a8e8a8"/><rect x="92" y="479" width="1" height="1" fill="#b8eab8"/><rect x="91" y="512" width="1" height="1" fill="#2e5a2e"/><rect x="91" y="529" width="1" height="1" fill="#b8eab8"/><rect x="91" y="566" width="1" height="1" fill="#b8eab8"/><rect x="91" y="582" width="1" height="1" fill="#b8eab8"/><rect x="91" y="614" width="1" height="1" fill="#b8eab8"/><rect x="91" y="634" width="1" height="1" fill="#b8eab8"/><rect x="90" y="660" width="1" height="1" fill="#8fdc8f"/><rect x="90" y="686" width="1" height="1" fill="#b8eab8"/><rect x="90" y="722" width="1" height="1" fill="#8fdc8f"/><rect x="90" y="738" width="1" height="1" fill="#6fae6f"/><rect x="90" y="755" width="1" height="1" fill="#8fdc8f"/><rect x="90" y="781" width="1" height="1" fill="#6fae6f"/><rect x="89" y="797" width="1" height="2" fill="#6fae6f"/><rect x="89" y="810" width="1" height="1" fill="#6fae6f"/><rect x="89" y="830" width="1" height="1" fill="#2e5a2e"/><rect x="89" y="850" width="1" height="1" fill="#2e5a2e"/><rect x="326" y="6" width="1" height="2" fill="#a8e8a8"/><rect x="326" y="19" width="1" height="1" fill="#6fae6f"/><rect x="326" y="45" width="1" height="2" fill="#a8e8a8"/><rect x="326" y="58" width="1" height="2" fill="#8fdc8f"/><rect x="325" y="78" width="1" height="1" fill="#a8e8a8"/><rect x="325" y="104" width="1" height="1" fill="#2e5a2e"/><rect x="325" y="144" width="1" height="1" fill="#a8e8a8"/><rect x="325" y="160" width="1" height="2" fill="#a8e8a8"/><rect x="325" y="177" width="1" height="2" fill="#8fdc8f"/><rect x="325" y="190" width="1" height="1" fill="#6fae6f"/><rect x="325" y="206" width="1" height="2" fill="#2e5a2e"/><rect x="324" y="236" width="1" height="2" fill="#a8e8a8"/><rect x="324" y="296" width="1" height="1" fill="#6fae6f"/><rect x="324" y="312" width="1" height="1" fill="#8fdc8f"/><rect x="324" y="332" width="1" height="1" fill="#8fdc8f"/><rect x="324" y="358" width="1" height="1" fill="#2e5a2e"/><rect x="323" y="375" width="1" height="2" fill="#8fdc8f"/><rect x="323" y="455" width="1" height="1" fill="#2e5a2e"/><rect x="323" y="475" width="1" height="1" fill="#8fdc8f"/><rect x="322" y="606" width="1" height="1" fill="#8fdc8f"/><rect x="322" y="623" width="1" height="1" fill="#b8eab8"/><rect x="322" y="643" width="1" height="2" fill="#2e5a2e"/><rect x="321" y="659" width="1" height="1" fill="#8fdc8f"/><rect x="321" y="675" width="1" height="2" fill="#b8eab8"/><rect x="321" y="691" width="1" height="1" fill="#6fae6f"/><rect x="321" y="708" width="1" height="1" fill="#6fae6f"/><rect x="321" y="721" width="1" height="2" fill="#2e5a2e"/><rect x="321" y="737" width="1" height="1" fill="#8fdc8f"/><rect x="321" y="750" width="1" height="2" fill="#a8e8a8"/><rect x="321" y="783" width="1" height="1" fill="#b8eab8"/><rect x="556" y="6" width="1" height="1" fill="#6fae6f"/><rect x="556" y="32" width="1" height="1" fill="#6fae6f"/><rect x="555" y="78" width="1" height="1" fill="#8fdc8f"/><rect x="555" y="94" width="1" height="2" fill="#2e5a2e"/><rect x="555" y="107" width="1" height="2" fill="#6fae6f"/><rect x="555" y="133" width="1" height="2" fill="#2e5a2e"/><rect x="555" y="146" width="1" height="1" fill="#a8e8a8"/><rect x="555" y="159" width="1" height="1" fill="#6fae6f"/><rect x="555" y="172" width="1" height="2" fill="#6fae6f"/><rect x="555" y="198" width="1" height="1" fill="#a8e8a8"/><rect x="554" y="224" width="1" height="2" fill="#b8eab8"/><rect x="554" y="240" width="1" height="2" fill="#a8e8a8"/><rect x="554" y="272" width="1" height="1" fill="#b8eab8"/><rect x="554" y="289" width="1" height="1" fill="#8fdc8f"/><rect x="554" y="302" width="1" height="1" fill="#a8e8a8"/><rect x="554" y="335" width="1" height="1" fill="#8fdc8f"/><rect x="554" y="351" width="1" height="1" fill="#2e5a2e"/><rect x="553" y="371" width="1" height="1" fill="#8fdc8f"/><rect x="553" y="411" width="1" height="1" fill="#8fdc8f"/><rect x="553" y="428" width="1" height="1" fill="#a8e8a8"/><rect x="553" y="445" width="1" height="2" fill="#b8eab8"/><rect x="553" y="458" width="1" height="2" fill="#6fae6f"/><rect x="553" y="475" width="1" height="1" fill="#2e5a2e"/><rect x="552" y="504" width="1" height="1" fill="#a8e8a8"/><rect x="552" y="520" width="1" height="1" fill="#8fdc8f"/><rect x="552" y="537" width="1" height="2" fill="#6fae6f"/><rect x="552" y="563" width="1" height="1" fill="#a8e8a8"/><rect x="552" y="580" width="1" height="1" fill="#8fdc8f"/><rect x="552" y="593" width="1" height="2" fill="#2e5a2e"/><rect x="552" y="619" width="1" height="1" fill="#8fdc8f"/><rect x="551" y="656" width="1" height="1" fill="#6fae6f"/><rect x="551" y="673" width="1" height="2" fill="#2e5a2e"/><rect x="551" y="705" width="1" height="1" fill="#8fdc8f"/><rect x="551" y="722" width="1" height="1" fill="#6fae6f"/><rect x="551" y="739" width="1" height="1" fill="#8fdc8f"/><rect x="551" y="773" width="1" height="2" fill="#2e5a2e"/><rect x="550" y="799" width="1" height="2" fill="#8fdc8f"/><rect x="550" y="819" width="1" height="1" fill="#b8eab8"/><rect x="550" y="839" width="1" height="1" fill="#6fae6f"/><rect x="787" y="6" width="1" height="1" fill="#8fdc8f"/><rect x="787" y="23" width="1" height="1" fill="#8fdc8f"/><rect x="787" y="56" width="1" height="1" fill="#a8e8a8"/><rect x="787" y="72" width="1" height="2" fill="#b8eab8"/><rect x="786" y="89" width="1" height="1" fill="#a8e8a8"/><rect x="786" y="109" width="1" height="1" fill="#a8e8a8"/><rect x="786" y="122" width="1" height="2" fill="#a8e8a8"/><rect x="786" y="139" width="1" height="1" fill="#a8e8a8"/><rect x="786" y="156" width="1" height="1" fill="#a8e8a8"/><rect x="786" y="169" width="1" height="2" fill="#6fae6f"/><rect x="786" y="185" width="1" height="1" fill="#2e5a2e"/><rect x="786" y="218" width="1" height="1" fill="#2e5a2e"/><rect x="785" y="231" width="1" height="1" fill="#8fdc8f"/><rect x="785" y="273" width="1" height="1" fill="#6fae6f"/><rect x="785" y="290" width="1" height="1" fill="#b8eab8"/><rect x="785" y="307" width="1" height="1" fill="#8fdc8f"/><rect x="785" y="333" width="1" height="1" fill="#6fae6f"/><rect x="784" y="440" width="1" height="1" fill="#2e5a2e"/><rect x="783" y="503" width="1" height="2" fill="#2e5a2e"/><rect x="783" y="529" width="1" height="1" fill="#b8eab8"/><rect x="783" y="542" width="1" height="2" fill="#2e5a2e"/><rect x="783" y="581" width="1" height="2" fill="#2e5a2e"/><rect x="783" y="601" width="1" height="1" fill="#2e5a2e"/><rect x="783" y="617" width="1" height="1" fill="#8fdc8f"/><rect x="783" y="637" width="1" height="1" fill="#b8eab8"/><rect x="782" y="700" width="1" height="1" fill="#8fdc8f"/><rect x="782" y="726" width="1" height="2" fill="#a8e8a8"/><rect x="782" y="743" width="1" height="1" fill="#8fdc8f"/><rect x="782" y="763" width="1" height="2" fill="#a8e8a8"/><rect x="782" y="776" width="1" height="1" fill="#b8eab8"/><rect x="781" y="802" width="1" height="1" fill="#b8eab8"/><rect x="781" y="841" width="1" height="1" fill="#2e5a2e"/><rect x="781" y="854" width="1" height="2" fill="#2e5a2e"/><rect x="1019" y="26" width="1" height="1" fill="#8fdc8f"/><rect x="1019" y="52" width="1" height="1" fill="#6fae6f"/><rect x="1019" y="69" width="1" height="1" fill="#6fae6f"/><rect x="1018" y="82" width="1" height="1" fill="#8fdc8f"/><rect x="1018" y="102" width="1" height="1" fill="#8fdc8f"/><rect x="1018" y="122" width="1" height="1" fill="#b8eab8"/><rect x="1018" y="138" width="1" height="1" fill="#b8eab8"/><rect x="1018" y="164" width="1" height="1" fill="#a8e8a8"/><rect x="1018" y="193" width="1" height="1" fill="#a8e8a8"/><rect x="1018" y="210" width="1" height="2" fill="#b8eab8"/><rect x="1017" y="223" width="1" height="1" fill="#b8eab8"/><rect x="1017" y="236" width="1" height="2" fill="#2e5a2e"/><rect x="1017" y="253" width="1" height="1" fill="#8fdc8f"/><rect x="1017" y="270" width="1" height="1" fill="#a8e8a8"/><rect x="1017" y="353" width="1" height="1" fill="#2e5a2e"/><rect x="1016" y="373" width="1" height="2" fill="#8fdc8f"/><rect x="1016" y="390" width="1" height="1" fill="#6fae6f"/><rect x="1016" y="406" width="1" height="1" fill="#a8e8a8"/><rect x="1016" y="423" width="1" height="1" fill="#a8e8a8"/><rect x="1016" y="439" width="1" height="2" fill="#6fae6f"/><rect x="1016" y="459" width="1" height="1" fill="#8fdc8f"/><rect x="1016" y="475" width="1" height="2" fill="#b8eab8"/><rect x="1016" y="491" width="1" height="1" fill="#a8e8a8"/><rect x="1015" y="511" width="1" height="1" fill="#8fdc8f"/><rect x="1015" y="524" width="1" height="1" fill="#6fae6f"/><rect x="1015" y="541" width="1" height="2" fill="#a8e8a8"/><rect x="1015" y="577" width="1" height="1" fill="#6fae6f"/><rect x="1015" y="597" width="1" height="1" fill="#2e5a2e"/><rect x="1015" y="614" width="1" height="1" fill="#a8e8a8"/><rect x="1015" y="640" width="1" height="1" fill="#8fdc8f"/><rect x="1014" y="677" width="1" height="1" fill="#b8eab8"/><rect x="1014" y="707" width="1" height="2" fill="#b8eab8"/><rect x="1014" y="747" width="1" height="2" fill="#b8eab8"/><rect x="1013" y="799" width="1" height="2" fill="#6fae6f"/><rect x="1013" y="832" width="1" height="1" fill="#2e5a2e"/><rect x="1013" y="848" width="1" height="2" fill="#2e5a2e"/><rect x="1249" y="23" width="1" height="2" fill="#b8eab8"/><rect x="1249" y="36" width="1" height="2" fill="#a8e8a8"/><rect x="1249" y="62" width="1" height="1" fill="#a8e8a8"/><rect x="1248" y="88" width="1" height="1" fill="#6fae6f"/><rect x="1248" y="108" width="1" height="2" fill="#a8e8a8"/><rect x="1248" y="124" width="1" height="2" fill="#8fdc8f"/><rect x="1248" y="140" width="1" height="2" fill="#b8eab8"/><rect x="1248" y="157" width="1" height="1" fill="#8fdc8f"/><rect x="1248" y="177" width="1" height="2" fill="#8fdc8f"/><rect x="1248" y="213" width="1" height="2" fill="#a8e8a8"/><rect x="1247" y="233" width="1" height="1" fill="#b8eab8"/><rect x="1247" y="272" width="1" height="1" fill="#b8eab8"/><rect x="1247" y="305" width="1" height="1" fill="#8fdc8f"/><rect x="1247" y="322" width="1" height="1" fill="#6fae6f"/><rect x="1247" y="348" width="1" height="1" fill="#8fdc8f"/><rect x="1246" y="410" width="1" height="1" fill="#6fae6f"/><rect x="1246" y="430" width="1" height="1" fill="#2e5a2e"/><rect x="1246" y="450" width="1" height="2" fill="#a8e8a8"/><rect x="1246" y="479" width="1" height="2" fill="#8fdc8f"/><rect x="1245" y="505" width="1" height="1" fill="#2e5a2e"/><rect x="1245" y="542" width="1" height="1" fill="#2e5a2e"/><rect x="1245" y="555" width="1" height="1" fill="#a8e8a8"/><rect x="1245" y="568" width="1" height="1" fill="#8fdc8f"/><rect x="1245" y="622" width="1" height="1" fill="#b8eab8"/><rect x="1245" y="639" width="1" height="1" fill="#b8eab8"/><rect x="1244" y="656" width="1" height="1" fill="#b8eab8"/><rect x="1244" y="676" width="1" height="1" fill="#b8eab8"/><rect x="1244" y="696" width="1" height="1" fill="#2e5a2e"/><rect x="1244" y="713" width="1" height="2" fill="#2e5a2e"/><rect x="1244" y="730" width="1" height="2" fill="#a8e8a8"/><rect x="1244" y="743" width="1" height="1" fill="#a8e8a8"/><rect x="1244" y="760" width="1" height="2" fill="#6fae6f"/><rect x="1244" y="773" width="1" height="1" fill="#8fdc8f"/><rect x="1243" y="793" width="1" height="1" fill="#b8eab8"/><rect x="1243" y="830" width="1" height="1" fill="#b8eab8"/></svg>
<div class="a" style="left:511px;top:286px;width:1012px;height:587px;border-radius:8px;box-shadow:0 14px 42px rgba(0,0,0,0.28),0 3px 8px rgba(0,0,0,0.10)"></div>
<div class="a" style="left:511px;top:286px;width:1012px;height:587px;border-radius:8px;background:#fff;border:1px solid #9c9c9c;overflow:hidden"><div class="a" style="left:0;top:0;width:1010px;height:38px;background:#f3f3f3"></div></div>
<div class="t" style="left:521px;top:297.5px;font-size:15px;color:#8a8a8a">Unfolding</div>
<div class="t" style="left:1431px;top:298px;font-size:15px;color:#8a8a8a">?</div>
<svg style="left:1484px;top:297px" width="16" height="16" viewBox="0 0 16 16" ><path d="M1.5 1.5l12.5 12.5M14 1.5L1.5 14" stroke="#555" stroke-width="1.1"/></svg>
<div class="a" style="left:511px;top:319px;width:91px;height:6px;background:#ffa500;border-radius:3px"></div>
<div class="a" style="left:520px;top:357px;width:878px;height:507px;border:1px solid #e3e3e3"></div>
<div class="a" style="left:521px;top:333px;width:46px;height:25px;background:#f9f9f9;border:1px solid #e6e6e6;border-bottom:none"></div>
<div class="t" style="left:528px;top:339.5px;font-size:12.8px;font-weight:bold;color:#111">Files</div>
<div class="btn" style="left:1417px;top:334px;width:96px;height:27px"></div>
<div class="t" style="left:1417px;top:340.5px;width:96px;text-align:center;font-size:12.8px;color:#111">Run</div>
<div class="btn" style="left:1417px;top:370px;width:96px;height:27px"></div>
<div class="t" style="left:1417px;top:377px;width:96px;text-align:center;font-size:12.8px;color:#111">Cancel</div>
<div class="btn" style="left:1417px;top:415px;width:96px;height:27px"></div>
<div class="t" style="left:1447px;top:422px;font-size:12.8px;color:#111">Forms</div>
<div class="a" style="left:1489px;top:419px;width:1px;height:19px;background:#888"></div>
<svg style="left:1495px;top:425px" width="14" height="8" viewBox="0 0 14 8" ><path d="M1 1h11l-5.5 5.5z" fill="#111"/></svg>
<div class="grp" style="left:536px;top:383px;width:416px;height:455px"></div>
<div class="gt" style="left:545px;top:377px">Block Model File</div>
<div class="grp" style="left:550px;top:601px;width:387px;height:115px"></div>
<div class="gt" style="left:559px;top:595px">Unfolded Coordinate Fields</div>
<div class="grp" style="left:965px;top:383px;width:415px;height:347px"></div>
<div class="gt" style="left:974px;top:377px">Sample File</div>
<div class="grp" style="left:979px;top:601px;width:387px;height:115px"></div>
<div class="gt" style="left:988px;top:595px">Unfolded Coordinate Fields</div>
<div class="grp" style="left:965px;top:745px;width:415px;height:93px"></div>
<div class="gt" style="left:974px;top:739px">Trend Model</div>
<div class="t" style="left:483px;width:150px;text-align:right;top:403.5px;font-size:12.8px;color:#850a0e">Input file</div>
<div class="fld" style="left:641px;top:397px;width:273px"></div>
<svg style="left:892px;top:402px" width="16" height="16" viewBox="0 0 16 16" ><rect x="1" y="1" width="14" height="14" rx="1" fill="#fff" stroke="#444" stroke-width="1.1"/><rect x="1" y="1" width="14" height="3" fill="#1f73c4"/></svg>
<div class="t" style="left:483px;width:150px;text-align:right;top:435.5px;font-size:12.8px;color:#1a1a1a">Type</div>
<div class="fld" style="left:641px;top:429px;width:116px;background:#fdfdfd;border-color:#c9c9c9;border-radius:2px"></div>
<div class="t" style="left:645px;top:435.5px;font-size:12.8px;color:#111">DATA</div>
<svg style="left:739px;top:438px" width="12" height="8" viewBox="0 0 12 8" ><path d="M1 1.5l5 5 5-5" fill="none" stroke="#333" stroke-width="1"/></svg>
<div class="a" style="left:578px;top:465px;width:16px;height:16px;border:1px solid #5a5a5a;border-radius:3px;background:#f6f6f6"></div>
<div class="t" style="left:601px;top:466.5px;font-size:12.8px;color:#1a1a1a">Filter</div>
<div class="fld" style="left:641px;top:461px;width:78px"></div>
<svg style="left:698px;top:465px" width="17" height="17" viewBox="0 0 17 17" ><rect x="1.5" y="1.5" width="13" height="12" rx="1" fill="#fff" stroke="#888" stroke-width="1"/><rect x="3" y="3.5" width="13" height="12.5" rx="1" fill="#fff" stroke="#777" stroke-width="1"/><path d="M5 7h9M5 10h9M5 13h9M9.5 5v10" stroke="#888" stroke-width="0.9"/></svg>
<div class="t" style="left:483px;width:150px;text-align:right;top:499.5px;font-size:12.8px;color:#850a0e">East field</div>
<div class="fld" style="left:641px;top:493px;width:118px"></div>
<svg style="left:741px;top:501px" width="10" height="10" viewBox="0 0 10 10" ><path d="M0.5 1h8M0.5 3.5h8M0.5 6h8M0.5 8.5h8" stroke="#333" stroke-width="1.1"/></svg>
<div class="t" style="left:483px;width:150px;text-align:right;top:531.5px;font-size:12.8px;color:#850a0e">North field</div>
<div class="fld" style="left:641px;top:525px;width:118px"></div>
<svg style="left:741px;top:533px" width="10" height="10" viewBox="0 0 10 10" ><path d="M0.5 1h8M0.5 3.5h8M0.5 6h8M0.5 8.5h8" stroke="#333" stroke-width="1.1"/></svg>
<div class="t" style="left:483px;width:150px;text-align:right;top:563.5px;font-size:12.8px;color:#850a0e">Z field</div>
<div class="fld" style="left:641px;top:557px;width:118px"></div>
<svg style="left:741px;top:565px" width="10" height="10" viewBox="0 0 10 10" ><path d="M0.5 1h8M0.5 3.5h8M0.5 6h8M0.5 8.5h8" stroke="#333" stroke-width="1.1"/></svg>
<div class="t" style="left:483px;width:150px;text-align:right;top:621.5px;font-size:12.8px;color:#850a0e">East</div>
<div class="fld" style="left:641px;top:615px;width:118px"></div>
<svg style="left:741px;top:623px" width="10" height="10" viewBox="0 0 10 10" ><path d="M0.5 1h8M0.5 3.5h8M0.5 6h8M0.5 8.5h8" stroke="#333" stroke-width="1.1"/></svg>
<div class="t" style="left:483px;width:150px;text-align:right;top:653.5px;font-size:12.8px;color:#850a0e">North</div>
<div class="fld" style="left:641px;top:647px;width:118px"></div>
<svg style="left:741px;top:655px" width="10" height="10" viewBox="0 0 10 10" ><path d="M0.5 1h8M0.5 3.5h8M0.5 6h8M0.5 8.5h8" stroke="#333" stroke-width="1.1"/></svg>
<div class="t" style="left:483px;width:150px;text-align:right;top:685.5px;font-size:12.8px;color:#850a0e">Z</div>
<div class="fld" style="left:641px;top:679px;width:118px"></div>
<svg style="left:741px;top:687px" width="10" height="10" viewBox="0 0 10 10" ><path d="M0.5 1h8M0.5 3.5h8M0.5 6h8M0.5 8.5h8" stroke="#333" stroke-width="1.1"/></svg>
<div class="t" style="left:912px;width:150px;text-align:right;top:403.5px;font-size:12.8px;color:#850a0e">File</div>
<div class="fld" style="left:1070px;top:397px;width:273px"></div>
<svg style="left:1321px;top:402px" width="16" height="16" viewBox="0 0 16 16" ><rect x="1" y="1" width="14" height="14" rx="1" fill="#fff" stroke="#444" stroke-width="1.1"/><rect x="1" y="1" width="14" height="3" fill="#1f73c4"/></svg>
<div class="t" style="left:912px;width:150px;text-align:right;top:435.5px;font-size:12.8px;color:#1a1a1a">Type</div>
<div class="fld" style="left:1070px;top:429px;width:116px;background:#fdfdfd;border-color:#c9c9c9;border-radius:2px"></div>
<div class="t" style="left:1074px;top:435.5px;font-size:12.8px;color:#111">DATA</div>
<svg style="left:1168px;top:438px" width="12" height="8" viewBox="0 0 12 8" ><path d="M1 1.5l5 5 5-5" fill="none" stroke="#333" stroke-width="1"/></svg>
<div class="a" style="left:1007px;top:465px;width:16px;height:16px;border:1px solid #5a5a5a;border-radius:3px;background:#f6f6f6"></div>
<div class="t" style="left:1030px;top:466.5px;font-size:12.8px;color:#1a1a1a">Filter</div>
<div class="fld" style="left:1070px;top:461px;width:79px"></div>
<svg style="left:1128px;top:465px" width="17" height="17" viewBox="0 0 17 17" ><rect x="1.5" y="1.5" width="13" height="12" rx="1" fill="#fff" stroke="#888" stroke-width="1"/><rect x="3" y="3.5" width="13" height="12.5" rx="1" fill="#fff" stroke="#777" stroke-width="1"/><path d="M5 7h9M5 10h9M5 13h9M9.5 5v10" stroke="#888" stroke-width="0.9"/></svg>
<div class="t" style="left:912px;width:150px;text-align:right;top:499.5px;font-size:12.8px;color:#850a0e">East field</div>
<div class="fld" style="left:1070px;top:493px;width:118px"></div>
<svg style="left:1170px;top:501px" width="10" height="10" viewBox="0 0 10 10" ><path d="M0.5 1h8M0.5 3.5h8M0.5 6h8M0.5 8.5h8" stroke="#333" stroke-width="1.1"/></svg>
<div class="t" style="left:912px;width:150px;text-align:right;top:531.5px;font-size:12.8px;color:#850a0e">North field</div>
<div class="fld" style="left:1070px;top:525px;width:118px"></div>
<svg style="left:1170px;top:533px" width="10" height="10" viewBox="0 0 10 10" ><path d="M0.5 1h8M0.5 3.5h8M0.5 6h8M0.5 8.5h8" stroke="#333" stroke-width="1.1"/></svg>
<div class="t" style="left:912px;width:150px;text-align:right;top:563.5px;font-size:12.8px;color:#850a0e">Z field</div>
<div class="fld" style="left:1070px;top:557px;width:118px"></div>
<svg style="left:1170px;top:565px" width="10" height="10" viewBox="0 0 10 10" ><path d="M0.5 1h8M0.5 3.5h8M0.5 6h8M0.5 8.5h8" stroke="#333" stroke-width="1.1"/></svg>
<div class="t" style="left:912px;width:150px;text-align:right;top:621.5px;font-size:12.8px;color:#850a0e">East</div>
<div class="fld" style="left:1070px;top:615px;width:118px"></div>
<svg style="left:1170px;top:623px" width="10" height="10" viewBox="0 0 10 10" ><path d="M0.5 1h8M0.5 3.5h8M0.5 6h8M0.5 8.5h8" stroke="#333" stroke-width="1.1"/></svg>
<div class="t" style="left:912px;width:150px;text-align:right;top:653.5px;font-size:12.8px;color:#850a0e">North</div>
<div class="fld" style="left:1070px;top:647px;width:118px"></div>
<svg style="left:1170px;top:655px" width="10" height="10" viewBox="0 0 10 10" ><path d="M0.5 1h8M0.5 3.5h8M0.5 6h8M0.5 8.5h8" stroke="#333" stroke-width="1.1"/></svg>
<div class="t" style="left:912px;width:150px;text-align:right;top:685.5px;font-size:12.8px;color:#850a0e">Z</div>
<div class="fld" style="left:1070px;top:679px;width:118px"></div>
<svg style="left:1170px;top:687px" width="10" height="10" viewBox="0 0 10 10" ><path d="M0.5 1h8M0.5 3.5h8M0.5 6h8M0.5 8.5h8" stroke="#333" stroke-width="1.1"/></svg>
<div class="t" style="left:483px;width:150px;text-align:right;top:757.5px;font-size:12.8px;color:#1a1a1a">Output file</div>
<div class="fld" style="left:641px;top:749px;width:273px"></div>
<svg style="left:892px;top:754px" width="16" height="16" viewBox="0 0 16 16" ><rect x="1" y="1" width="14" height="14" rx="1" fill="#1f7ad0" stroke="#3a4a5a" stroke-width="1"/></svg>
<div class="t" style="left:483px;width:150px;text-align:right;top:785.5px;font-size:12.8px;color:#1a1a1a">Type</div>
<div class="fld" style="left:641px;top:779px;width:116px;background:#fdfdfd;border-color:#c9c9c9;border-radius:2px"></div>
<div class="t" style="left:645px;top:785.5px;font-size:12.8px;color:#111">DATA</div>
<svg style="left:739px;top:788px" width="12" height="8" viewBox="0 0 12 8" ><path d="M1 1.5l5 5 5-5" fill="none" stroke="#333" stroke-width="1"/></svg>
<div class="t" style="left:912px;width:150px;text-align:right;top:783.5px;font-size:12.8px;color:#850a0e">Trend File</div>
<div class="fld" style="left:1070px;top:777px;width:273px"></div>
<svg style="left:1321px;top:782px" width="16" height="16" viewBox="0 0 16 16" ><rect x="1" y="1" width="14" height="14" rx="1" fill="#fff" stroke="#444" stroke-width="1.1"/><rect x="1" y="1" width="14" height="3" fill="#1f73c4"/><path d="M4 11h1.5M7.3 11h1.5M10.5 11h1.5" stroke="#222" stroke-width="1.6"/></svg>
<div class="t" style="left:1076px;top:782.5px;font-size:12.8px;color:#111">Client Unfold\Unflod Trend Model</div>
<div class="a" style="left:1005px;top:816px;width:343px;height:6px;background:#ffa800;border-radius:3px"></div>
<div class="a" style="left:1005px;top:819px;width:356px;height:6px;background:#ffa800;border-radius:3px"></div>
<svg style="left:1502px;top:854px" width="18" height="12" viewBox="0 0 18 12" ><path d="M1.5 10.5l7.5-8 7.5 8" fill="none" stroke="#555" stroke-width="1"/></svg>
<svg style="left:498px;top:1000px" width="60" height="60" viewBox="0 0 60 60" ><defs><linearGradient id="gg" x1="0" x2="1"><stop offset="0" stop-color="#0a8a0a"/><stop offset=".5" stop-color="#30ff30"/><stop offset="1" stop-color="#0a8a0a"/></linearGradient><linearGradient id="rg" x1="0" y1="0" x2="0" y2="1"><stop offset="0" stop-color="#ff4040"/><stop offset=".5" stop-color="#ff2020"/><stop offset="1" stop-color="#900000"/></linearGradient></defs><rect x="9.5" y="18" width="4" height="30" fill="url(#gg)"/><path d="M6 19.5L11.5 5 17 19.5z" fill="url(#gg)"/><rect x="12" y="45" width="27" height="4.5" fill="url(#rg)"/><path d="M38.5 41.5L53 47.3 38.5 53z" fill="url(#rg)"/><circle cx="11.6" cy="47.2" r="5" fill="#1a1aa0"/><circle cx="10.5" cy="46" r="2" fill="#4a4ae0"/></svg>
<svg style="left:1640px;top:1051px" width="250" height="40" viewBox="0 0 250 40" ><rect x="0.5" y="0.5" width="231.5" height="10.5" fill="#fff" stroke="#000" stroke-width="1"/><rect x="0" y="0" width="23.7" height="5.3" fill="#000"/><rect x="46.7" y="0" width="45.89999999999999" height="5.3" fill="#000"/><rect x="139" y="0" width="46.5" height="5.3" fill="#000"/><rect x="23.7" y="5.3" width="23.000000000000004" height="5.7" fill="#000"/><rect x="92.6" y="5.3" width="46.400000000000006" height="5.7" fill="#000"/><rect x="185.5" y="5.3" width="46.099999999999994" height="5.7" fill="#000"/><line x1="0.5" y1="10" x2="0.5" y2="19.5" stroke="#000" stroke-width="1"/><line x1="46.7" y1="10" x2="46.7" y2="19.5" stroke="#000" stroke-width="1"/><line x1="92.6" y1="10" x2="92.6" y2="19.5" stroke="#000" stroke-width="1"/><line x1="139" y1="10" x2="139" y2="19.5" stroke="#000" stroke-width="1"/><line x1="185.5" y1="10" x2="185.5" y2="19.5" stroke="#000" stroke-width="1"/><line x1="231.1" y1="10" x2="231.1" y2="19.5" stroke="#000" stroke-width="1"/><text x="0.5" y="32.5" text-anchor="middle" font-family="Liberation Sans" font-size="12" fill="#000">20</text><text x="46.7" y="32.5" text-anchor="middle" font-family="Liberation Sans" font-size="12" fill="#000">0</text><text x="92.6" y="32.5" text-anchor="middle" font-family="Liberation Sans" font-size="12" fill="#000">20</text><text x="139" y="32.5" text-anchor="middle" font-family="Liberation Sans" font-size="12" fill="#000">40</text><text x="185.5" y="32.5" text-anchor="middle" font-family="Liberation Sans" font-size="12" fill="#000">60</text><text x="218" y="32.5" font-family="Liberation Sans" font-size="12" fill="#000">80m</text></svg>
</body></html>
